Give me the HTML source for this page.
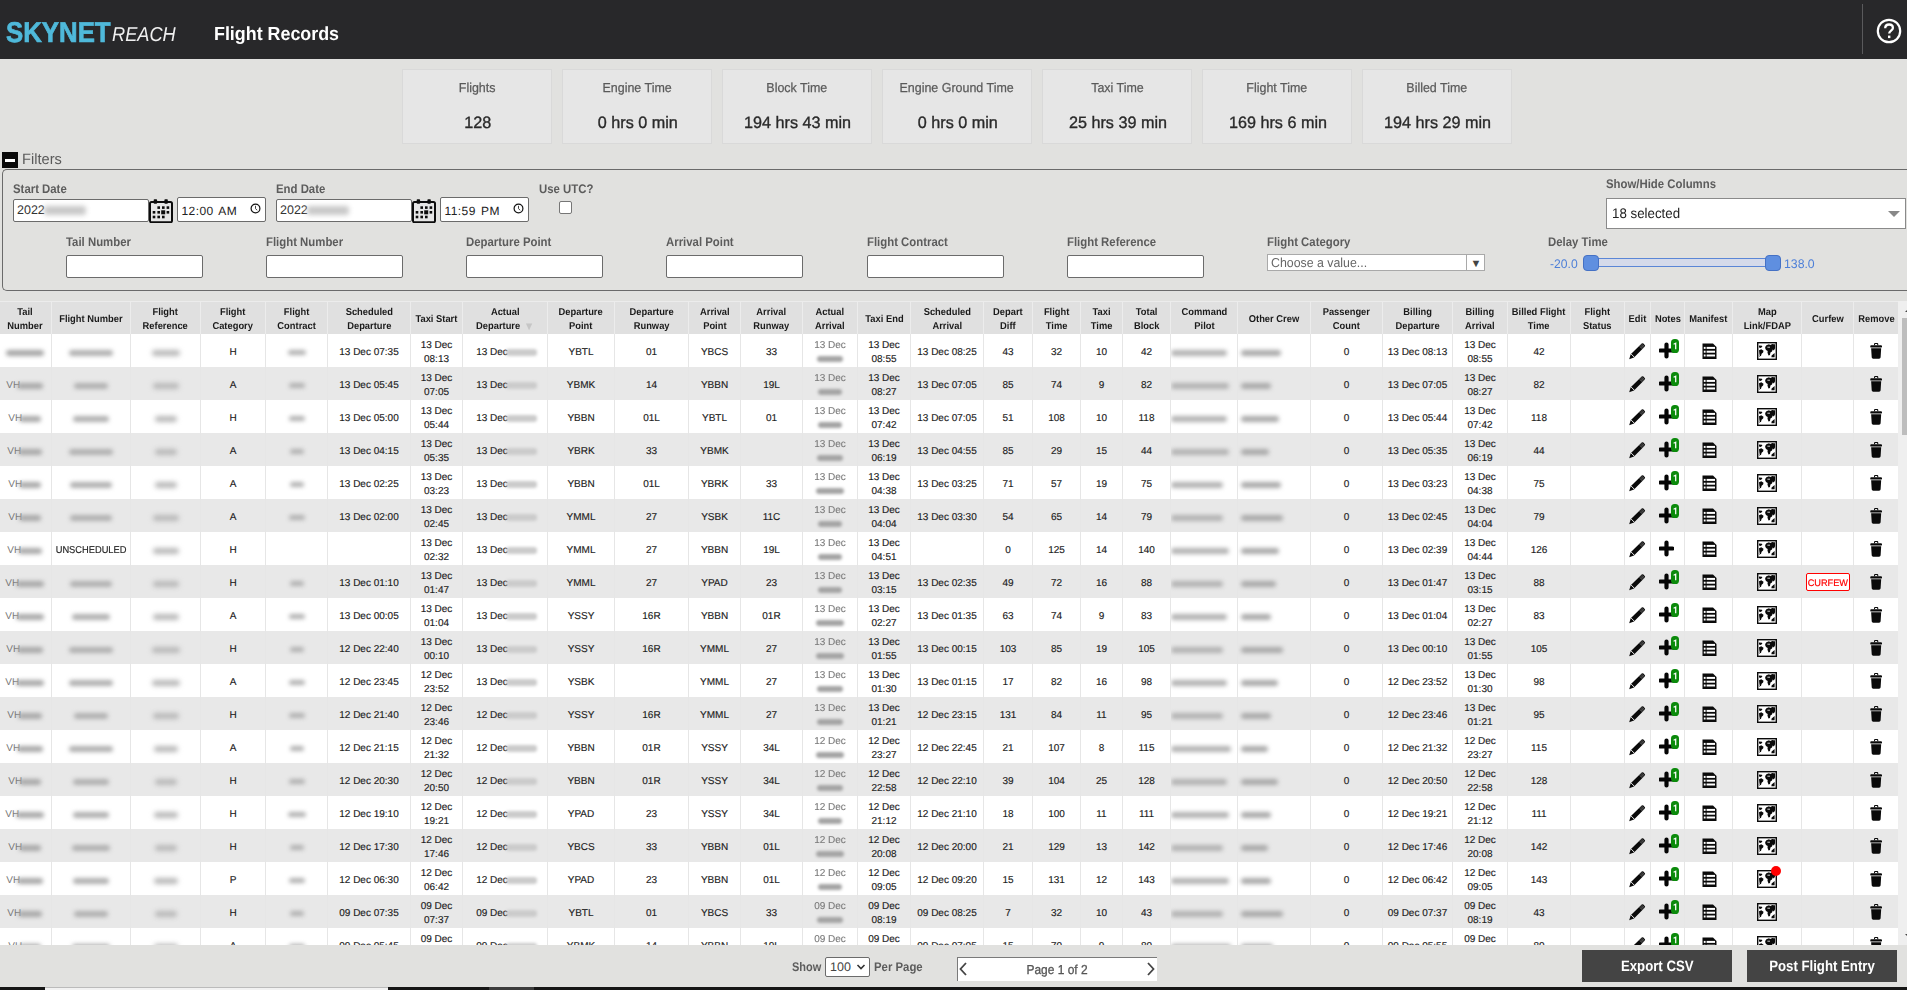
<!DOCTYPE html><html><head><meta charset="utf-8"><title>Flight Records</title><style>
*{box-sizing:border-box;margin:0;padding:0}
html,body{width:1907px;height:990px;overflow:hidden;background:#e1e1df;font-family:"Liberation Sans",sans-serif;text-rendering:geometricPrecision;}
.abs{position:absolute}
.t{position:absolute;white-space:nowrap;display:inline-block;transform-origin:0 50%;}
.tc{transform-origin:50% 50%;}
#top{position:absolute;left:0;top:0;width:1907px;height:59px;background:#28282a;}
.card{position:absolute;top:69px;width:150px;height:75px;background:#e6e6e6;border:1px solid #d9d9d9;}
.card .l{position:absolute;left:0;width:148px;top:10px;text-align:center;font-size:13px;color:#5a5a5a;line-height:16px}
.card .v{position:absolute;left:0;width:148px;top:41.6px;text-align:center;font-size:16.5px;color:#2a2a2a;line-height:22px;-webkit-text-stroke:.35px #2a2a2a;}
.card span{display:inline-block;transform-origin:50% 50%}
.lbl{position:absolute;font-size:12.5px;font-weight:bold;color:#5c5c5c;white-space:nowrap;line-height:15px;transform-origin:0 50%;transform:scaleX(.91)}
.inp{position:absolute;background:#fff;border:1px solid #6b6b6b;border-radius:2px;}
/* table */
#tbl{position:absolute;left:0;top:301px;width:1898px;height:644px;overflow:hidden;background:#fff}
.row{position:absolute;left:0;width:1898px;height:33px;}
.row.h{background:#e0e0e0;border-top:1px solid #ececec}
.row.h .c{height:32px}
.row.e{background:#e8e8e8}
.row.o{background:#fff}
.c{position:absolute;top:0;height:33px;border-right:1px solid #e6e6e6;display:flex;align-items:center;justify-content:center;text-align:center;font-size:10px;line-height:14px;color:#1c1c1c;overflow:hidden;-webkit-text-stroke:.15px #1c1c1c}
.row.h .c{-webkit-text-stroke:0;font-weight:bold;color:#1a1a1a;border-right:1px solid #ececec;line-height:14px}
.c>span{display:inline-block;transform-origin:50% 50%;white-space:nowrap;position:relative;top:2px}
.row.h .c>span{transform:scaleX(.935);top:1.5px}
.bl{display:inline-block;background:#8a8a8a;border-radius:3px;filter:blur(1.6px);vertical-align:middle}
.g{color:#8c8c8c}
svg{display:block}
</style></head><body>
<div id="top">
<span class="t" style="left:6px;top:15.8px;font-size:28.5px;font-weight:bold;color:#4fb9da;line-height:34px;transform:scaleX(.905);-webkit-text-stroke:.7px #4fb9da">SKYNET</span>
<span class="t" style="left:112px;top:20px;font-size:20px;font-style:italic;color:#f0f0f0;line-height:30px;transform:scaleX(.91)">REACH</span>
<span class="t" style="left:214px;top:23.4px;font-size:19px;font-weight:bold;color:#fff;line-height:24px;transform:scaleX(.94)">Flight Records</span>
<div class="abs" style="left:1862px;top:4px;width:1px;height:50px;background:#5a5a5c"></div>
<svg class="abs" style="left:1875px;top:17px" width="28" height="28" viewBox="0 0 28 28"><circle cx="14" cy="14" r="11.2" fill="none" stroke="#fff" stroke-width="2.2"/><path d="M10.2 11.2c0-2.3 1.7-3.7 3.9-3.7 2.2 0 3.8 1.4 3.8 3.4 0 2.6-3.7 3-3.7 5.7" fill="none" stroke="#fff" stroke-width="2.3"/><rect x="13" y="18.6" width="2.4" height="2.5" fill="#fff"/></svg>
</div>
<div class="card" style="left:402px"><div class="l"><span style="transform:scaleX(.958);-webkit-text-stroke:.25px #5a5a5a">Flights</span></div><div class="v"><span style="transform:scaleX(.98);position:relative;left:.8px">128</span></div></div>
<div class="card" style="left:562px"><div class="l"><span style="transform:scaleX(.958);-webkit-text-stroke:.25px #5a5a5a">Engine Time</span></div><div class="v"><span style="transform:scaleX(.98);position:relative;left:.8px">0 hrs 0 min</span></div></div>
<div class="card" style="left:722px"><div class="l"><span style="transform:scaleX(.958);-webkit-text-stroke:.25px #5a5a5a">Block Time</span></div><div class="v"><span style="transform:scaleX(.98);position:relative;left:.8px">194 hrs 43 min</span></div></div>
<div class="card" style="left:882px"><div class="l"><span style="transform:scaleX(.958);-webkit-text-stroke:.25px #5a5a5a">Engine Ground Time</span></div><div class="v"><span style="transform:scaleX(.98);position:relative;left:.8px">0 hrs 0 min</span></div></div>
<div class="card" style="left:1042px"><div class="l"><span style="transform:scaleX(.958);-webkit-text-stroke:.25px #5a5a5a">Taxi Time</span></div><div class="v"><span style="transform:scaleX(.98);position:relative;left:.8px">25 hrs 39 min</span></div></div>
<div class="card" style="left:1202px"><div class="l"><span style="transform:scaleX(.958);-webkit-text-stroke:.25px #5a5a5a">Flight Time</span></div><div class="v"><span style="transform:scaleX(.98);position:relative;left:.8px">169 hrs 6 min</span></div></div>
<div class="card" style="left:1362px"><div class="l"><span style="transform:scaleX(.958);-webkit-text-stroke:.25px #5a5a5a">Billed Time</span></div><div class="v"><span style="transform:scaleX(.98);position:relative;left:.8px">194 hrs 29 min</span></div></div>
<div class="abs" style="left:2px;top:152px;width:16px;height:16px;background:#0a0a0a"></div><div class="abs" style="left:5px;top:159px;width:10px;height:3px;background:#fff"></div>
<span class="t" style="left:22px;top:151px;font-size:15px;color:#5a5a5a;line-height:18px;transform:scaleX(.975)">Filters</span>
<div class="abs" style="left:2px;top:169px;width:1905px;height:122px;border:1px solid #6a6a6a;border-right:0;border-radius:5px 0 0 5px"></div>
<span class="lbl" style="left:13px;top:182px">Start Date</span>
<div class="inp" style="left:13px;top:199px;width:135.5px;height:23px"><span class="t" style="left:3px;top:3px;font-size:12.5px;color:#333;line-height:15px">2022</span><span class="bl" style="position:absolute;left:30px;top:6px;width:42px;height:9px;background:#c8c8c8;filter:blur(2.5px)"></span></div>
<div class="abs" style="left:148.6px;top:198px"><svg width="24" height="25" viewBox="0 0 24 25"><rect x="1" y="4" width="22" height="20.200" rx="1.500" fill="#e6e6e6" stroke="#0c0c0c" stroke-width="2"/><rect x="4.700" y="1.200" width="3.400" height="4.600" rx=".8" fill="#0c0c0c"/><rect x="15.400" y="1.200" width="3.400" height="4.600" rx=".8" fill="#0c0c0c"/><rect x="8.40" y="8.30" width="2.6" height="2.6" fill="#0c0c0c"/><rect x="13.00" y="8.30" width="2.6" height="2.6" fill="#0c0c0c"/><rect x="17.60" y="8.30" width="2.6" height="2.6" fill="#0c0c0c"/><rect x="3.70" y="13.00" width="2.6" height="2.6" fill="#0c0c0c"/><rect x="8.40" y="13.00" width="2.6" height="2.6" fill="#0c0c0c"/><rect x="12.20" y="12.30" width="4" height="4" fill="#0c0c0c"/><rect x="17.60" y="13.00" width="2.6" height="2.6" fill="#0c0c0c"/><rect x="3.70" y="17.70" width="2.6" height="2.6" fill="#0c0c0c"/><rect x="8.40" y="17.70" width="2.6" height="2.6" fill="#0c0c0c"/><rect x="13.00" y="17.70" width="2.6" height="2.6" fill="#0c0c0c"/></svg></div>
<div class="inp" style="left:177px;top:197px;width:89px;height:25px"><span class="t" style="left:3.5px;top:4.6px;font-size:12px;color:#222;line-height:16px;letter-spacing:.42px;word-spacing:1.5px">12:00 AM</span><div class="abs" style="left:70.6px;top:4.2px"><svg width="13" height="13" viewBox="0 0 13 13"><circle cx="6.5" cy="6.5" r="4.4" fill="none" stroke="#111" stroke-width="1.2"/><path d="M6.5 3.800v2.900l1.700 1.500" fill="none" stroke="#444" stroke-width="1"/></svg></div></div>
<span class="lbl" style="left:276px;top:182px">End Date</span>
<div class="inp" style="left:276px;top:199px;width:135.5px;height:23px"><span class="t" style="left:3px;top:3px;font-size:12.5px;color:#333;line-height:15px">2022</span><span class="bl" style="position:absolute;left:30px;top:6px;width:42px;height:9px;background:#c8c8c8;filter:blur(2.5px)"></span></div>
<div class="abs" style="left:411.6px;top:198px"><svg width="24" height="25" viewBox="0 0 24 25"><rect x="1" y="4" width="22" height="20.200" rx="1.500" fill="#e6e6e6" stroke="#0c0c0c" stroke-width="2"/><rect x="4.700" y="1.200" width="3.400" height="4.600" rx=".8" fill="#0c0c0c"/><rect x="15.400" y="1.200" width="3.400" height="4.600" rx=".8" fill="#0c0c0c"/><rect x="8.40" y="8.30" width="2.6" height="2.6" fill="#0c0c0c"/><rect x="13.00" y="8.30" width="2.6" height="2.6" fill="#0c0c0c"/><rect x="17.60" y="8.30" width="2.6" height="2.6" fill="#0c0c0c"/><rect x="3.70" y="13.00" width="2.6" height="2.6" fill="#0c0c0c"/><rect x="8.40" y="13.00" width="2.6" height="2.6" fill="#0c0c0c"/><rect x="12.20" y="12.30" width="4" height="4" fill="#0c0c0c"/><rect x="17.60" y="13.00" width="2.6" height="2.6" fill="#0c0c0c"/><rect x="3.70" y="17.70" width="2.6" height="2.6" fill="#0c0c0c"/><rect x="8.40" y="17.70" width="2.6" height="2.6" fill="#0c0c0c"/><rect x="13.00" y="17.70" width="2.6" height="2.6" fill="#0c0c0c"/></svg></div>
<div class="inp" style="left:440px;top:197px;width:89px;height:25px"><span class="t" style="left:3.5px;top:4.6px;font-size:12px;color:#222;line-height:16px;letter-spacing:.42px;word-spacing:1.5px">11:59 PM</span><div class="abs" style="left:70.6px;top:4.2px"><svg width="13" height="13" viewBox="0 0 13 13"><circle cx="6.5" cy="6.5" r="4.4" fill="none" stroke="#111" stroke-width="1.2"/><path d="M6.5 3.800v2.900l1.700 1.500" fill="none" stroke="#444" stroke-width="1"/></svg></div></div>
<span class="lbl" style="left:539px;top:182px">Use UTC?</span>
<div class="abs" style="left:559px;top:201px;width:13px;height:13px;background:#fff;border:1px solid #767676;border-radius:2px"></div>
<span class="lbl" style="left:66px;top:235px">Tail Number</span>
<div class="inp" style="left:66px;top:255px;width:137px;height:23px"></div>
<span class="lbl" style="left:266px;top:235px">Flight Number</span>
<div class="inp" style="left:266px;top:255px;width:137px;height:23px"></div>
<span class="lbl" style="left:466px;top:235px">Departure Point</span>
<div class="inp" style="left:466px;top:255px;width:137px;height:23px"></div>
<span class="lbl" style="left:666px;top:235px">Arrival Point</span>
<div class="inp" style="left:666px;top:255px;width:137px;height:23px"></div>
<span class="lbl" style="left:867px;top:235px">Flight Contract</span>
<div class="inp" style="left:867px;top:255px;width:137px;height:23px"></div>
<span class="lbl" style="left:1067px;top:235px">Flight Reference</span>
<div class="inp" style="left:1067px;top:255px;width:137px;height:23px"></div>
<span class="lbl" style="left:1267px;top:235px">Flight Category</span>
<div class="abs" style="left:1267px;top:254px;width:218px;height:17px;background:#fff;border:1px solid #a9a9a9"><span class="t" style="left:3px;top:0px;font-size:13px;color:#666;line-height:15px;transform:scaleX(.95)">Choose a value...</span><div class="abs" style="left:198px;top:0;width:1px;height:15px;background:#a9a9a9"></div><span class="t" style="left:202.5px;top:1.5px;font-size:11px;color:#444;line-height:14px">&#9660;</span></div>
<span class="lbl" style="left:1548px;top:235px">Delay Time</span>
<span class="t" style="left:1550px;top:257px;font-size:12.5px;color:#4d7fd8;line-height:15px;transform:scaleX(.97)">-20.0</span>
<div class="abs" style="left:1590px;top:258px;width:184px;height:9px;background:#d5daea;border:1px solid #5b86d6"></div>
<div class="abs" style="left:1583px;top:255px;width:16px;height:16px;background:#5f8fe0;border:1px solid #4571c4;border-radius:4px"></div>
<div class="abs" style="left:1765px;top:255px;width:16px;height:16px;background:#5f8fe0;border:1px solid #4571c4;border-radius:4px"></div>
<span class="t" style="left:1784px;top:257px;font-size:12.5px;color:#4d7fd8;line-height:15px;transform:scaleX(.98)">138.0</span>
<span class="lbl" style="left:1606px;top:177px">Show/Hide Columns</span>
<div class="abs" style="left:1606px;top:198px;width:300px;height:31px;background:#fff;border:1px solid #8a8a8a"><span class="t" style="left:5px;top:6px;font-size:14px;color:#222;line-height:17px;transform:scaleX(.95)">18 selected</span><div class="abs" style="left:281px;top:12px;width:0;height:0;border-left:6px solid transparent;border-right:6px solid transparent;border-top:6px solid #888"></div></div>
<div id="tbl">
<div class="row h" style="top:0">
<div class="c" style="left:0px;width:52px;padding-right:1.5px;"><span>Tail<br>Number</span></div>
<div class="c" style="left:52px;width:79px;"><span>Flight Number</span></div>
<div class="c" style="left:131px;width:70px;"><span>Flight<br>Reference</span></div>
<div class="c" style="left:201px;width:65px;"><span>Flight<br>Category</span></div>
<div class="c" style="left:266px;width:62px;"><span>Flight<br>Contract</span></div>
<div class="c" style="left:328px;width:83px;"><span>Scheduled<br>Departure</span></div>
<div class="c" style="left:411px;width:52px;"><span>Taxi Start</span></div>
<div class="c" style="left:463px;width:85px;"><span>Actual<br>Departure <i style="font-style:normal;color:#c6c6c6;font-size:11.5px;line-height:0;position:relative;top:1px;margin-left:1px">&#9660;</i></span></div>
<div class="c" style="left:548px;width:67px;"><span>Departure<br>Point</span></div>
<div class="c" style="left:615px;width:74px;"><span>Departure<br>Runway</span></div>
<div class="c" style="left:689px;width:52px;"><span>Arrival<br>Point</span></div>
<div class="c" style="left:741px;width:62px;"><span>Arrival<br>Runway</span></div>
<div class="c" style="left:803px;width:55px;"><span>Actual<br>Arrival</span></div>
<div class="c" style="left:858px;width:53px;"><span>Taxi End</span></div>
<div class="c" style="left:911px;width:73px;"><span>Scheduled<br>Arrival</span></div>
<div class="c" style="left:984px;width:49px;"><span>Depart<br>Diff</span></div>
<div class="c" style="left:1033px;width:48px;"><span>Flight<br>Time</span></div>
<div class="c" style="left:1081px;width:42px;"><span>Taxi<br>Time</span></div>
<div class="c" style="left:1123px;width:48px;"><span>Total<br>Block</span></div>
<div class="c" style="left:1171px;width:67px;"><span>Command<br>Pilot</span></div>
<div class="c" style="left:1238px;width:73px;"><span>Other Crew</span></div>
<div class="c" style="left:1311px;width:72px;"><span>Passenger<br>Count</span></div>
<div class="c" style="left:1383px;width:70px;"><span>Billing<br>Departure</span></div>
<div class="c" style="left:1453px;width:55px;"><span>Billing<br>Arrival</span></div>
<div class="c" style="left:1508px;width:63px;"><span>Billed Flight<br>Time</span></div>
<div class="c" style="left:1571px;width:54px;"><span>Flight<br>Status</span></div>
<div class="c" style="left:1625px;width:26px;"><span>Edit</span></div>
<div class="c" style="left:1651px;width:34px;"><span>Notes</span></div>
<div class="c" style="left:1685px;width:48px;"><span>Manifest</span></div>
<div class="c" style="left:1733px;width:69px;"><span>Map<br>Link/FDAP</span></div>
<div class="c" style="left:1802px;width:52px;"><span>Curfew</span></div>
<div class="c" style="left:1854px;width:45px;"><span>Remove</span></div>
</div>
<div class="row o" style="top:33px">
<div class="c" style="left:0px;width:52px;padding-right:1.5px;"><span class="bl" style="width:38px;height:6px;background:#a6a6a6;filter:blur(2px);"></span></div>
<div class="c" style="left:52px;width:79px;"><span class="bl" style="width:44px;height:6px;background:#b0b0b0;filter:blur(2.2px);"></span></div>
<div class="c" style="left:131px;width:70px;"><span class="bl" style="width:28px;height:6px;background:#b8b8b8;filter:blur(2.4px);"></span></div>
<div class="c" style="left:201px;width:65px;"><span>H</span></div>
<div class="c" style="left:266px;width:62px;"><span class="bl" style="width:18px;height:5px;background:#b0b0b0;filter:blur(2px);"></span></div>
<div class="c" style="left:328px;width:83px;"><span>13 Dec 07:35</span></div>
<div class="c" style="left:411px;width:52px;"><span>13 Dec<br>08:13</span></div>
<div class="c" style="left:463px;width:85px;"><span style="margin-right:-2px;margin-left:3px">13 Dec</span><span class="bl" style="width:31px;height:7px;background:#cbcbcb;filter:blur(1.6px);"></span></div>
<div class="c" style="left:548px;width:67px;"><span>YBTL</span></div>
<div class="c" style="left:615px;width:74px;"><span>01</span></div>
<div class="c" style="left:689px;width:52px;"><span>YBCS</span></div>
<div class="c" style="left:741px;width:62px;"><span>33</span></div>
<div class="c" style="left:803px;width:55px;"><span style="filter:blur(.45px);color:#787878;-webkit-text-stroke:.1px #787878">13 Dec<br><span class="bl" style="width:26px;height:6px;background:#a4a4a4;filter:blur(1.8px);"></span></span></div>
<div class="c" style="left:858px;width:53px;"><span>13 Dec<br>08:55</span></div>
<div class="c" style="left:911px;width:73px;"><span>13 Dec 08:25</span></div>
<div class="c" style="left:984px;width:49px;"><span>43</span></div>
<div class="c" style="left:1033px;width:48px;"><span>32</span></div>
<div class="c" style="left:1081px;width:42px;"><span>10</span></div>
<div class="c" style="left:1123px;width:48px;"><span>42</span></div>
<div class="c" style="left:1171px;width:67px;justify-content:flex-start;padding-left:0"><span class="bl" style="width:56px;height:6px;background:#b2b2b2;filter:blur(1.9px);"></span></div>
<div class="c" style="left:1238px;width:73px;justify-content:flex-start;padding-left:3px"><span class="bl" style="width:40px;height:6px;background:#a9a9a9;filter:blur(2px);"></span></div>
<div class="c" style="left:1311px;width:72px;"><span>0</span></div>
<div class="c" style="left:1383px;width:70px;"><span>13 Dec 08:13</span></div>
<div class="c" style="left:1453px;width:55px;"><span>13 Dec<br>08:55</span></div>
<div class="c" style="left:1508px;width:63px;"><span>42</span></div>
<div class="c" style="left:1571px;width:54px;"></div>
<div class="c" style="left:1625px;width:26px;padding-bottom:0"><svg style="position:relative;left:.2px;top:.9px" width="17" height="17" viewBox="0 0 17 17"><path d="M0.2 16.3L1.700 11.200 12.700 0.400Q13.600-.2 14.400.600L15.700 1.900Q16.400 2.700 15.900 3.600L5 14.600Z" fill="#0a0a0a"/><path d="M2 10.900l3.300 3.300" stroke="#fff" stroke-width=".9"/><path d="M10.800 3.300l2.500 2.500M11.900 2.300l2.500 2.500M12.900 1.300l2.500 2.500" stroke="#cfcfcf" stroke-width=".55"/></svg></div>
<div class="c" style="left:1651px;width:34px;overflow:visible"><svg style="position:relative;left:-.9px;top:-.1px" width="15" height="17" viewBox="0 0 15 17"><path d="M7.500 2.500v12M1.500 8.500h11.900" stroke="#050505" stroke-width="4.200" stroke-linecap="round" fill="none"/></svg><svg style="position:absolute;left:20px;top:4.8px" width="8" height="14" viewBox="0 0 8 14"><rect width="8" height="14" rx="3.600" fill="#0b8a0b"/><path d="M2.600 5.200L4.700 4.200V10.200" fill="none" stroke="#fff" stroke-width="1.250"/></svg></div>
<div class="c" style="left:1685px;width:48px;"><svg style="position:relative;left:.5px;top:1px" width="15" height="17" viewBox="0 0 15 17"><path d="M0.5 0.5h10.500l3.500 3.500v12.100h-14z" fill="#0a0a0a"/><g fill="#fff"><rect x="1.800" y="3.900" width="1.800" height="2"/><rect x="4.600" y="3.900" width="8.400" height="2"/><rect x="1.800" y="7.700" width="1.800" height="2"/><rect x="4.600" y="7.700" width="8.400" height="2"/><rect x="1.800" y="11.500" width="1.800" height="2"/><rect x="4.600" y="11.500" width="8.400" height="2"/></g></svg></div>
<div class="c" style="left:1733px;width:69px;"><svg width="20" height="18" viewBox="0 0 20 18"><rect x=".7" y=".7" width="18.600" height="16.600" fill="#fff" stroke="#0a0a0a" stroke-width="1.400"/><path d="M2 3.500l3 .3.300.9-1.600 1.300-1.700-.6zM2 8.200l2.300-.9 2.200 1.500-.4 1.800-1.500 1.200-.6 2.300-1.200-.2-.5-2.700zM8.200 5l1.200-1.800 2.600-.9 1.100.7 2.300-.9 2.700.3v3.800l-1.200 2.200-1.200-.9-.7 2-1.600 1-.4 2.600-1.500.4-1-2.700.2-1.900-1.700-.9-.8-1.700zM14.600 13.600l3-2.600v4.200h-3.200z" fill="#0a0a0a"/><path d="M10.400 5.200h2.600" stroke="#fff" stroke-width=".8"/><path d="M2 13.800l.8.900M16.800 3.200l.8-.5" stroke="#0a0a0a" stroke-width=".7"/></svg></div>
<div class="c" style="left:1802px;width:52px;"></div>
<div class="c" style="left:1854px;width:45px;"><svg style="position:relative;left:.25px;top:.5px" width="12.3" height="16.200" viewBox="0 0 13 17"><path d="M4.800 2.200v-1c0-.5.300-.8.800-.8h1.800c.5 0 .8.300.8.800v1" fill="none" stroke="#0a0a0a" stroke-width="1.100"/><path d="M1.400 2.300h10.200c.7 0 1.100.5 1.100 1.100v.7c0 .3-.2.500-.5.500h-11.400c-.3 0-.5-.2-.5-.5v-.7c0-.6.4-1.100 1.100-1.100z" fill="#0a0a0a"/><path d="M1.200 5.600h10.600l-.6 9.400c-.1.900-.7 1.500-1.600 1.500h-6.200c-.9 0-1.500-.6-1.600-1.500z" fill="#0a0a0a"/></svg></div>
</div>
<div class="row e" style="top:66px">
<div class="c" style="left:0px;width:52px;padding-right:1.5px;"><span style="margin-right:-3px;color:#777;-webkit-text-stroke:0">VH</span><span class="bl" style="width:26px;height:6px;background:#a8a8a8;filter:blur(2.2px);"></span></div>
<div class="c" style="left:52px;width:79px;"><span class="bl" style="width:34px;height:6px;background:#b0b0b0;filter:blur(2.2px);"></span></div>
<div class="c" style="left:131px;width:70px;"><span class="bl" style="width:26px;height:6px;background:#b8b8b8;filter:blur(2.4px);"></span></div>
<div class="c" style="left:201px;width:65px;"><span>A</span></div>
<div class="c" style="left:266px;width:62px;"><span class="bl" style="width:16px;height:5px;background:#b0b0b0;filter:blur(2px);"></span></div>
<div class="c" style="left:328px;width:83px;"><span>13 Dec 05:45</span></div>
<div class="c" style="left:411px;width:52px;"><span>13 Dec<br>07:05</span></div>
<div class="c" style="left:463px;width:85px;"><span style="margin-right:-2px;margin-left:3px">13 Dec</span><span class="bl" style="width:31px;height:7px;background:#cbcbcb;filter:blur(1.6px);"></span></div>
<div class="c" style="left:548px;width:67px;"><span>YBMK</span></div>
<div class="c" style="left:615px;width:74px;"><span>14</span></div>
<div class="c" style="left:689px;width:52px;"><span>YBBN</span></div>
<div class="c" style="left:741px;width:62px;"><span>19L</span></div>
<div class="c" style="left:803px;width:55px;"><span style="filter:blur(.45px);color:#787878;-webkit-text-stroke:.1px #787878">13 Dec<br><span class="bl" style="width:24px;height:6px;background:#a4a4a4;filter:blur(1.8px);"></span></span></div>
<div class="c" style="left:858px;width:53px;"><span>13 Dec<br>08:27</span></div>
<div class="c" style="left:911px;width:73px;"><span>13 Dec 07:05</span></div>
<div class="c" style="left:984px;width:49px;"><span>85</span></div>
<div class="c" style="left:1033px;width:48px;"><span>74</span></div>
<div class="c" style="left:1081px;width:42px;"><span>9</span></div>
<div class="c" style="left:1123px;width:48px;"><span>82</span></div>
<div class="c" style="left:1171px;width:67px;justify-content:flex-start;padding-left:0"><span class="bl" style="width:58px;height:6px;background:#b2b2b2;filter:blur(1.9px);"></span></div>
<div class="c" style="left:1238px;width:73px;justify-content:flex-start;padding-left:3px"><span class="bl" style="width:30px;height:6px;background:#a9a9a9;filter:blur(2px);"></span></div>
<div class="c" style="left:1311px;width:72px;"><span>0</span></div>
<div class="c" style="left:1383px;width:70px;"><span>13 Dec 07:05</span></div>
<div class="c" style="left:1453px;width:55px;"><span>13 Dec<br>08:27</span></div>
<div class="c" style="left:1508px;width:63px;"><span>82</span></div>
<div class="c" style="left:1571px;width:54px;"></div>
<div class="c" style="left:1625px;width:26px;padding-bottom:0"><svg style="position:relative;left:.2px;top:.9px" width="17" height="17" viewBox="0 0 17 17"><path d="M0.2 16.3L1.700 11.200 12.700 0.400Q13.600-.2 14.400.600L15.700 1.900Q16.400 2.700 15.900 3.600L5 14.600Z" fill="#0a0a0a"/><path d="M2 10.900l3.300 3.300" stroke="#fff" stroke-width=".9"/><path d="M10.800 3.300l2.500 2.500M11.900 2.300l2.500 2.500M12.900 1.300l2.500 2.500" stroke="#cfcfcf" stroke-width=".55"/></svg></div>
<div class="c" style="left:1651px;width:34px;overflow:visible"><svg style="position:relative;left:-.9px;top:-.1px" width="15" height="17" viewBox="0 0 15 17"><path d="M7.500 2.500v12M1.500 8.500h11.900" stroke="#050505" stroke-width="4.200" stroke-linecap="round" fill="none"/></svg><svg style="position:absolute;left:20px;top:4.8px" width="8" height="14" viewBox="0 0 8 14"><rect width="8" height="14" rx="3.600" fill="#0b8a0b"/><path d="M2.600 5.200L4.700 4.200V10.200" fill="none" stroke="#fff" stroke-width="1.250"/></svg></div>
<div class="c" style="left:1685px;width:48px;"><svg style="position:relative;left:.5px;top:1px" width="15" height="17" viewBox="0 0 15 17"><path d="M0.5 0.5h10.500l3.500 3.500v12.100h-14z" fill="#0a0a0a"/><g fill="#fff"><rect x="1.800" y="3.900" width="1.800" height="2"/><rect x="4.600" y="3.900" width="8.400" height="2"/><rect x="1.800" y="7.700" width="1.800" height="2"/><rect x="4.600" y="7.700" width="8.400" height="2"/><rect x="1.800" y="11.500" width="1.800" height="2"/><rect x="4.600" y="11.500" width="8.400" height="2"/></g></svg></div>
<div class="c" style="left:1733px;width:69px;"><svg width="20" height="18" viewBox="0 0 20 18"><rect x=".7" y=".7" width="18.600" height="16.600" fill="#fff" stroke="#0a0a0a" stroke-width="1.400"/><path d="M2 3.500l3 .3.300.9-1.600 1.300-1.700-.6zM2 8.200l2.300-.9 2.200 1.500-.4 1.800-1.500 1.200-.6 2.300-1.200-.2-.5-2.700zM8.200 5l1.200-1.800 2.600-.9 1.100.7 2.300-.9 2.700.3v3.800l-1.200 2.200-1.200-.9-.7 2-1.600 1-.4 2.600-1.500.4-1-2.700.2-1.900-1.700-.9-.8-1.700zM14.600 13.600l3-2.600v4.200h-3.200z" fill="#0a0a0a"/><path d="M10.400 5.200h2.600" stroke="#fff" stroke-width=".8"/><path d="M2 13.800l.8.900M16.800 3.200l.8-.5" stroke="#0a0a0a" stroke-width=".7"/></svg></div>
<div class="c" style="left:1802px;width:52px;"></div>
<div class="c" style="left:1854px;width:45px;"><svg style="position:relative;left:.25px;top:.5px" width="12.3" height="16.200" viewBox="0 0 13 17"><path d="M4.800 2.200v-1c0-.5.300-.8.800-.8h1.800c.5 0 .8.300.8.800v1" fill="none" stroke="#0a0a0a" stroke-width="1.100"/><path d="M1.400 2.300h10.200c.7 0 1.100.5 1.100 1.100v.7c0 .3-.2.500-.5.500h-11.400c-.3 0-.5-.2-.5-.5v-.7c0-.6.4-1.100 1.100-1.100z" fill="#0a0a0a"/><path d="M1.200 5.600h10.600l-.6 9.400c-.1.900-.7 1.500-1.600 1.500h-6.200c-.9 0-1.500-.6-1.600-1.500z" fill="#0a0a0a"/></svg></div>
</div>
<div class="row o" style="top:99px">
<div class="c" style="left:0px;width:52px;padding-right:1.5px;"><span style="margin-right:-3px;color:#777;-webkit-text-stroke:0">VH</span><span class="bl" style="width:22px;height:6px;background:#a8a8a8;filter:blur(2.2px);"></span></div>
<div class="c" style="left:52px;width:79px;"><span class="bl" style="width:36px;height:6px;background:#b0b0b0;filter:blur(2.2px);"></span></div>
<div class="c" style="left:131px;width:70px;"><span class="bl" style="width:22px;height:6px;background:#b8b8b8;filter:blur(2.4px);"></span></div>
<div class="c" style="left:201px;width:65px;"><span>H</span></div>
<div class="c" style="left:266px;width:62px;"><span class="bl" style="width:16px;height:5px;background:#b0b0b0;filter:blur(2px);"></span></div>
<div class="c" style="left:328px;width:83px;"><span>13 Dec 05:00</span></div>
<div class="c" style="left:411px;width:52px;"><span>13 Dec<br>05:44</span></div>
<div class="c" style="left:463px;width:85px;"><span style="margin-right:-2px;margin-left:3px">13 Dec</span><span class="bl" style="width:31px;height:7px;background:#cbcbcb;filter:blur(1.6px);"></span></div>
<div class="c" style="left:548px;width:67px;"><span>YBBN</span></div>
<div class="c" style="left:615px;width:74px;"><span>01L</span></div>
<div class="c" style="left:689px;width:52px;"><span>YBTL</span></div>
<div class="c" style="left:741px;width:62px;"><span>01</span></div>
<div class="c" style="left:803px;width:55px;"><span style="filter:blur(.45px);color:#787878;-webkit-text-stroke:.1px #787878">13 Dec<br><span class="bl" style="width:24px;height:6px;background:#a4a4a4;filter:blur(1.8px);"></span></span></div>
<div class="c" style="left:858px;width:53px;"><span>13 Dec<br>07:42</span></div>
<div class="c" style="left:911px;width:73px;"><span>13 Dec 07:05</span></div>
<div class="c" style="left:984px;width:49px;"><span>51</span></div>
<div class="c" style="left:1033px;width:48px;"><span>108</span></div>
<div class="c" style="left:1081px;width:42px;"><span>10</span></div>
<div class="c" style="left:1123px;width:48px;"><span>118</span></div>
<div class="c" style="left:1171px;width:67px;justify-content:flex-start;padding-left:0"><span class="bl" style="width:56px;height:6px;background:#b2b2b2;filter:blur(1.9px);"></span></div>
<div class="c" style="left:1238px;width:73px;justify-content:flex-start;padding-left:3px"><span class="bl" style="width:38px;height:6px;background:#a9a9a9;filter:blur(2px);"></span></div>
<div class="c" style="left:1311px;width:72px;"><span>0</span></div>
<div class="c" style="left:1383px;width:70px;"><span>13 Dec 05:44</span></div>
<div class="c" style="left:1453px;width:55px;"><span>13 Dec<br>07:42</span></div>
<div class="c" style="left:1508px;width:63px;"><span>118</span></div>
<div class="c" style="left:1571px;width:54px;"></div>
<div class="c" style="left:1625px;width:26px;padding-bottom:0"><svg style="position:relative;left:.2px;top:.9px" width="17" height="17" viewBox="0 0 17 17"><path d="M0.2 16.3L1.700 11.200 12.700 0.400Q13.600-.2 14.400.600L15.700 1.900Q16.400 2.700 15.900 3.600L5 14.600Z" fill="#0a0a0a"/><path d="M2 10.900l3.300 3.300" stroke="#fff" stroke-width=".9"/><path d="M10.800 3.300l2.500 2.500M11.900 2.300l2.500 2.500M12.900 1.300l2.500 2.500" stroke="#cfcfcf" stroke-width=".55"/></svg></div>
<div class="c" style="left:1651px;width:34px;overflow:visible"><svg style="position:relative;left:-.9px;top:-.1px" width="15" height="17" viewBox="0 0 15 17"><path d="M7.500 2.500v12M1.500 8.500h11.900" stroke="#050505" stroke-width="4.200" stroke-linecap="round" fill="none"/></svg><svg style="position:absolute;left:20px;top:4.8px" width="8" height="14" viewBox="0 0 8 14"><rect width="8" height="14" rx="3.600" fill="#0b8a0b"/><path d="M2.600 5.200L4.700 4.200V10.200" fill="none" stroke="#fff" stroke-width="1.250"/></svg></div>
<div class="c" style="left:1685px;width:48px;"><svg style="position:relative;left:.5px;top:1px" width="15" height="17" viewBox="0 0 15 17"><path d="M0.5 0.5h10.500l3.500 3.500v12.100h-14z" fill="#0a0a0a"/><g fill="#fff"><rect x="1.800" y="3.900" width="1.800" height="2"/><rect x="4.600" y="3.900" width="8.400" height="2"/><rect x="1.800" y="7.700" width="1.800" height="2"/><rect x="4.600" y="7.700" width="8.400" height="2"/><rect x="1.800" y="11.500" width="1.800" height="2"/><rect x="4.600" y="11.500" width="8.400" height="2"/></g></svg></div>
<div class="c" style="left:1733px;width:69px;"><svg width="20" height="18" viewBox="0 0 20 18"><rect x=".7" y=".7" width="18.600" height="16.600" fill="#fff" stroke="#0a0a0a" stroke-width="1.400"/><path d="M2 3.500l3 .3.300.9-1.600 1.300-1.700-.6zM2 8.200l2.300-.9 2.200 1.500-.4 1.800-1.500 1.200-.6 2.300-1.200-.2-.5-2.700zM8.200 5l1.200-1.800 2.600-.9 1.100.7 2.300-.9 2.700.3v3.800l-1.200 2.200-1.200-.9-.7 2-1.600 1-.4 2.600-1.500.4-1-2.700.2-1.900-1.700-.9-.8-1.700zM14.600 13.600l3-2.600v4.200h-3.200z" fill="#0a0a0a"/><path d="M10.400 5.200h2.600" stroke="#fff" stroke-width=".8"/><path d="M2 13.800l.8.900M16.800 3.200l.8-.5" stroke="#0a0a0a" stroke-width=".7"/></svg></div>
<div class="c" style="left:1802px;width:52px;"></div>
<div class="c" style="left:1854px;width:45px;"><svg style="position:relative;left:.25px;top:.5px" width="12.3" height="16.200" viewBox="0 0 13 17"><path d="M4.800 2.200v-1c0-.5.300-.8.800-.8h1.800c.5 0 .8.300.8.800v1" fill="none" stroke="#0a0a0a" stroke-width="1.100"/><path d="M1.400 2.300h10.200c.7 0 1.100.5 1.100 1.100v.7c0 .3-.2.500-.5.500h-11.400c-.3 0-.5-.2-.5-.5v-.7c0-.6.4-1.100 1.100-1.100z" fill="#0a0a0a"/><path d="M1.200 5.600h10.600l-.6 9.400c-.1.900-.7 1.500-1.600 1.500h-6.200c-.9 0-1.500-.6-1.600-1.500z" fill="#0a0a0a"/></svg></div>
</div>
<div class="row e" style="top:132px">
<div class="c" style="left:0px;width:52px;padding-right:1.5px;"><span style="margin-right:-3px;color:#777;-webkit-text-stroke:0">VH</span><span class="bl" style="width:24px;height:6px;background:#a8a8a8;filter:blur(2.2px);"></span></div>
<div class="c" style="left:52px;width:79px;"><span class="bl" style="width:44px;height:6px;background:#b0b0b0;filter:blur(2.2px);"></span></div>
<div class="c" style="left:131px;width:70px;"><span class="bl" style="width:22px;height:6px;background:#b8b8b8;filter:blur(2.4px);"></span></div>
<div class="c" style="left:201px;width:65px;"><span>A</span></div>
<div class="c" style="left:266px;width:62px;"><span class="bl" style="width:14px;height:5px;background:#b0b0b0;filter:blur(2px);"></span></div>
<div class="c" style="left:328px;width:83px;"><span>13 Dec 04:15</span></div>
<div class="c" style="left:411px;width:52px;"><span>13 Dec<br>05:35</span></div>
<div class="c" style="left:463px;width:85px;"><span style="margin-right:-2px;margin-left:3px">13 Dec</span><span class="bl" style="width:31px;height:7px;background:#cbcbcb;filter:blur(1.6px);"></span></div>
<div class="c" style="left:548px;width:67px;"><span>YBRK</span></div>
<div class="c" style="left:615px;width:74px;"><span>33</span></div>
<div class="c" style="left:689px;width:52px;"><span>YBMK</span></div>
<div class="c" style="left:741px;width:62px;"><span></span></div>
<div class="c" style="left:803px;width:55px;"><span style="filter:blur(.45px);color:#787878;-webkit-text-stroke:.1px #787878">13 Dec<br><span class="bl" style="width:26px;height:6px;background:#a4a4a4;filter:blur(1.8px);"></span></span></div>
<div class="c" style="left:858px;width:53px;"><span>13 Dec<br>06:19</span></div>
<div class="c" style="left:911px;width:73px;"><span>13 Dec 04:55</span></div>
<div class="c" style="left:984px;width:49px;"><span>85</span></div>
<div class="c" style="left:1033px;width:48px;"><span>29</span></div>
<div class="c" style="left:1081px;width:42px;"><span>15</span></div>
<div class="c" style="left:1123px;width:48px;"><span>44</span></div>
<div class="c" style="left:1171px;width:67px;justify-content:flex-start;padding-left:0"><span class="bl" style="width:58px;height:6px;background:#b2b2b2;filter:blur(1.9px);"></span></div>
<div class="c" style="left:1238px;width:73px;justify-content:flex-start;padding-left:3px"><span class="bl" style="width:28px;height:6px;background:#a9a9a9;filter:blur(2px);"></span></div>
<div class="c" style="left:1311px;width:72px;"><span>0</span></div>
<div class="c" style="left:1383px;width:70px;"><span>13 Dec 05:35</span></div>
<div class="c" style="left:1453px;width:55px;"><span>13 Dec<br>06:19</span></div>
<div class="c" style="left:1508px;width:63px;"><span>44</span></div>
<div class="c" style="left:1571px;width:54px;"></div>
<div class="c" style="left:1625px;width:26px;padding-bottom:0"><svg style="position:relative;left:.2px;top:.9px" width="17" height="17" viewBox="0 0 17 17"><path d="M0.2 16.3L1.700 11.200 12.700 0.400Q13.600-.2 14.400.600L15.700 1.900Q16.400 2.700 15.900 3.600L5 14.600Z" fill="#0a0a0a"/><path d="M2 10.900l3.300 3.300" stroke="#fff" stroke-width=".9"/><path d="M10.800 3.300l2.500 2.500M11.900 2.300l2.500 2.500M12.900 1.300l2.500 2.500" stroke="#cfcfcf" stroke-width=".55"/></svg></div>
<div class="c" style="left:1651px;width:34px;overflow:visible"><svg style="position:relative;left:-.9px;top:-.1px" width="15" height="17" viewBox="0 0 15 17"><path d="M7.500 2.500v12M1.500 8.500h11.900" stroke="#050505" stroke-width="4.200" stroke-linecap="round" fill="none"/></svg><svg style="position:absolute;left:20px;top:4.8px" width="8" height="14" viewBox="0 0 8 14"><rect width="8" height="14" rx="3.600" fill="#0b8a0b"/><path d="M2.600 5.200L4.700 4.200V10.200" fill="none" stroke="#fff" stroke-width="1.250"/></svg></div>
<div class="c" style="left:1685px;width:48px;"><svg style="position:relative;left:.5px;top:1px" width="15" height="17" viewBox="0 0 15 17"><path d="M0.5 0.5h10.500l3.500 3.500v12.100h-14z" fill="#0a0a0a"/><g fill="#fff"><rect x="1.800" y="3.900" width="1.800" height="2"/><rect x="4.600" y="3.900" width="8.400" height="2"/><rect x="1.800" y="7.700" width="1.800" height="2"/><rect x="4.600" y="7.700" width="8.400" height="2"/><rect x="1.800" y="11.500" width="1.800" height="2"/><rect x="4.600" y="11.500" width="8.400" height="2"/></g></svg></div>
<div class="c" style="left:1733px;width:69px;"><svg width="20" height="18" viewBox="0 0 20 18"><rect x=".7" y=".7" width="18.600" height="16.600" fill="#fff" stroke="#0a0a0a" stroke-width="1.400"/><path d="M2 3.500l3 .3.300.9-1.600 1.300-1.700-.6zM2 8.200l2.300-.9 2.200 1.500-.4 1.800-1.500 1.200-.6 2.300-1.200-.2-.5-2.700zM8.200 5l1.200-1.800 2.600-.9 1.100.7 2.300-.9 2.700.3v3.800l-1.200 2.200-1.200-.9-.7 2-1.600 1-.4 2.600-1.500.4-1-2.700.2-1.900-1.700-.9-.8-1.700zM14.600 13.600l3-2.600v4.200h-3.200z" fill="#0a0a0a"/><path d="M10.400 5.200h2.600" stroke="#fff" stroke-width=".8"/><path d="M2 13.800l.8.900M16.800 3.200l.8-.5" stroke="#0a0a0a" stroke-width=".7"/></svg></div>
<div class="c" style="left:1802px;width:52px;"></div>
<div class="c" style="left:1854px;width:45px;"><svg style="position:relative;left:.25px;top:.5px" width="12.3" height="16.200" viewBox="0 0 13 17"><path d="M4.800 2.200v-1c0-.5.300-.8.800-.8h1.800c.5 0 .8.300.8.800v1" fill="none" stroke="#0a0a0a" stroke-width="1.100"/><path d="M1.400 2.300h10.200c.7 0 1.100.5 1.100 1.100v.7c0 .3-.2.500-.5.500h-11.400c-.3 0-.5-.2-.5-.5v-.7c0-.6.4-1.100 1.100-1.100z" fill="#0a0a0a"/><path d="M1.200 5.600h10.600l-.6 9.400c-.1.900-.7 1.500-1.600 1.500h-6.200c-.9 0-1.500-.6-1.600-1.500z" fill="#0a0a0a"/></svg></div>
</div>
<div class="row o" style="top:165px">
<div class="c" style="left:0px;width:52px;padding-right:1.5px;"><span style="margin-right:-3px;color:#777;-webkit-text-stroke:0">VH</span><span class="bl" style="width:22px;height:6px;background:#a8a8a8;filter:blur(2.2px);"></span></div>
<div class="c" style="left:52px;width:79px;"><span class="bl" style="width:42px;height:6px;background:#b0b0b0;filter:blur(2.2px);"></span></div>
<div class="c" style="left:131px;width:70px;"><span class="bl" style="width:22px;height:6px;background:#b8b8b8;filter:blur(2.4px);"></span></div>
<div class="c" style="left:201px;width:65px;"><span>A</span></div>
<div class="c" style="left:266px;width:62px;"><span class="bl" style="width:14px;height:5px;background:#b0b0b0;filter:blur(2px);"></span></div>
<div class="c" style="left:328px;width:83px;"><span>13 Dec 02:25</span></div>
<div class="c" style="left:411px;width:52px;"><span>13 Dec<br>03:23</span></div>
<div class="c" style="left:463px;width:85px;"><span style="margin-right:-2px;margin-left:3px">13 Dec</span><span class="bl" style="width:31px;height:7px;background:#cbcbcb;filter:blur(1.6px);"></span></div>
<div class="c" style="left:548px;width:67px;"><span>YBBN</span></div>
<div class="c" style="left:615px;width:74px;"><span>01L</span></div>
<div class="c" style="left:689px;width:52px;"><span>YBRK</span></div>
<div class="c" style="left:741px;width:62px;"><span>33</span></div>
<div class="c" style="left:803px;width:55px;"><span style="filter:blur(.45px);color:#787878;-webkit-text-stroke:.1px #787878">13 Dec<br><span class="bl" style="width:28px;height:6px;background:#a4a4a4;filter:blur(1.8px);"></span></span></div>
<div class="c" style="left:858px;width:53px;"><span>13 Dec<br>04:38</span></div>
<div class="c" style="left:911px;width:73px;"><span>13 Dec 03:25</span></div>
<div class="c" style="left:984px;width:49px;"><span>71</span></div>
<div class="c" style="left:1033px;width:48px;"><span>57</span></div>
<div class="c" style="left:1081px;width:42px;"><span>19</span></div>
<div class="c" style="left:1123px;width:48px;"><span>75</span></div>
<div class="c" style="left:1171px;width:67px;justify-content:flex-start;padding-left:0"><span class="bl" style="width:52px;height:6px;background:#b2b2b2;filter:blur(1.9px);"></span></div>
<div class="c" style="left:1238px;width:73px;justify-content:flex-start;padding-left:3px"><span class="bl" style="width:40px;height:6px;background:#a9a9a9;filter:blur(2px);"></span></div>
<div class="c" style="left:1311px;width:72px;"><span>0</span></div>
<div class="c" style="left:1383px;width:70px;"><span>13 Dec 03:23</span></div>
<div class="c" style="left:1453px;width:55px;"><span>13 Dec<br>04:38</span></div>
<div class="c" style="left:1508px;width:63px;"><span>75</span></div>
<div class="c" style="left:1571px;width:54px;"></div>
<div class="c" style="left:1625px;width:26px;padding-bottom:0"><svg style="position:relative;left:.2px;top:.9px" width="17" height="17" viewBox="0 0 17 17"><path d="M0.2 16.3L1.700 11.200 12.700 0.400Q13.600-.2 14.400.600L15.700 1.900Q16.400 2.700 15.900 3.600L5 14.600Z" fill="#0a0a0a"/><path d="M2 10.900l3.300 3.300" stroke="#fff" stroke-width=".9"/><path d="M10.800 3.300l2.500 2.500M11.900 2.300l2.500 2.500M12.900 1.300l2.500 2.500" stroke="#cfcfcf" stroke-width=".55"/></svg></div>
<div class="c" style="left:1651px;width:34px;overflow:visible"><svg style="position:relative;left:-.9px;top:-.1px" width="15" height="17" viewBox="0 0 15 17"><path d="M7.500 2.500v12M1.500 8.500h11.900" stroke="#050505" stroke-width="4.200" stroke-linecap="round" fill="none"/></svg><svg style="position:absolute;left:20px;top:4.8px" width="8" height="14" viewBox="0 0 8 14"><rect width="8" height="14" rx="3.600" fill="#0b8a0b"/><path d="M2.600 5.200L4.700 4.200V10.200" fill="none" stroke="#fff" stroke-width="1.250"/></svg></div>
<div class="c" style="left:1685px;width:48px;"><svg style="position:relative;left:.5px;top:1px" width="15" height="17" viewBox="0 0 15 17"><path d="M0.5 0.5h10.500l3.500 3.500v12.100h-14z" fill="#0a0a0a"/><g fill="#fff"><rect x="1.800" y="3.900" width="1.800" height="2"/><rect x="4.600" y="3.900" width="8.400" height="2"/><rect x="1.800" y="7.700" width="1.800" height="2"/><rect x="4.600" y="7.700" width="8.400" height="2"/><rect x="1.800" y="11.500" width="1.800" height="2"/><rect x="4.600" y="11.500" width="8.400" height="2"/></g></svg></div>
<div class="c" style="left:1733px;width:69px;"><svg width="20" height="18" viewBox="0 0 20 18"><rect x=".7" y=".7" width="18.600" height="16.600" fill="#fff" stroke="#0a0a0a" stroke-width="1.400"/><path d="M2 3.500l3 .3.300.9-1.600 1.300-1.700-.6zM2 8.200l2.300-.9 2.200 1.500-.4 1.800-1.500 1.200-.6 2.300-1.200-.2-.5-2.700zM8.200 5l1.200-1.800 2.600-.9 1.100.7 2.300-.9 2.700.3v3.800l-1.200 2.200-1.200-.9-.7 2-1.600 1-.4 2.600-1.500.4-1-2.700.2-1.900-1.700-.9-.8-1.700zM14.600 13.600l3-2.600v4.200h-3.200z" fill="#0a0a0a"/><path d="M10.400 5.200h2.600" stroke="#fff" stroke-width=".8"/><path d="M2 13.800l.8.900M16.800 3.200l.8-.5" stroke="#0a0a0a" stroke-width=".7"/></svg></div>
<div class="c" style="left:1802px;width:52px;"></div>
<div class="c" style="left:1854px;width:45px;"><svg style="position:relative;left:.25px;top:.5px" width="12.3" height="16.200" viewBox="0 0 13 17"><path d="M4.800 2.200v-1c0-.5.300-.8.800-.8h1.800c.5 0 .8.300.8.800v1" fill="none" stroke="#0a0a0a" stroke-width="1.100"/><path d="M1.400 2.300h10.200c.7 0 1.100.5 1.100 1.100v.7c0 .3-.2.500-.5.500h-11.400c-.3 0-.5-.2-.5-.5v-.7c0-.6.4-1.100 1.100-1.100z" fill="#0a0a0a"/><path d="M1.200 5.600h10.600l-.6 9.400c-.1.900-.7 1.500-1.600 1.500h-6.200c-.9 0-1.500-.6-1.600-1.500z" fill="#0a0a0a"/></svg></div>
</div>
<div class="row e" style="top:198px">
<div class="c" style="left:0px;width:52px;padding-right:1.5px;"><span style="margin-right:-3px;color:#777;-webkit-text-stroke:0">VH</span><span class="bl" style="width:22px;height:6px;background:#a8a8a8;filter:blur(2.2px);"></span></div>
<div class="c" style="left:52px;width:79px;"><span class="bl" style="width:42px;height:6px;background:#b0b0b0;filter:blur(2.2px);"></span></div>
<div class="c" style="left:131px;width:70px;"><span class="bl" style="width:26px;height:6px;background:#b8b8b8;filter:blur(2.4px);"></span></div>
<div class="c" style="left:201px;width:65px;"><span>A</span></div>
<div class="c" style="left:266px;width:62px;"><span class="bl" style="width:16px;height:5px;background:#b0b0b0;filter:blur(2px);"></span></div>
<div class="c" style="left:328px;width:83px;"><span>13 Dec 02:00</span></div>
<div class="c" style="left:411px;width:52px;"><span>13 Dec<br>02:45</span></div>
<div class="c" style="left:463px;width:85px;"><span style="margin-right:-2px;margin-left:3px">13 Dec</span><span class="bl" style="width:31px;height:7px;background:#cbcbcb;filter:blur(1.6px);"></span></div>
<div class="c" style="left:548px;width:67px;"><span>YMML</span></div>
<div class="c" style="left:615px;width:74px;"><span>27</span></div>
<div class="c" style="left:689px;width:52px;"><span>YSBK</span></div>
<div class="c" style="left:741px;width:62px;"><span>11C</span></div>
<div class="c" style="left:803px;width:55px;"><span style="filter:blur(.45px);color:#787878;-webkit-text-stroke:.1px #787878">13 Dec<br><span class="bl" style="width:24px;height:6px;background:#a4a4a4;filter:blur(1.8px);"></span></span></div>
<div class="c" style="left:858px;width:53px;"><span>13 Dec<br>04:04</span></div>
<div class="c" style="left:911px;width:73px;"><span>13 Dec 03:30</span></div>
<div class="c" style="left:984px;width:49px;"><span>54</span></div>
<div class="c" style="left:1033px;width:48px;"><span>65</span></div>
<div class="c" style="left:1081px;width:42px;"><span>14</span></div>
<div class="c" style="left:1123px;width:48px;"><span>79</span></div>
<div class="c" style="left:1171px;width:67px;justify-content:flex-start;padding-left:0"><span class="bl" style="width:52px;height:6px;background:#b2b2b2;filter:blur(1.9px);"></span></div>
<div class="c" style="left:1238px;width:73px;justify-content:flex-start;padding-left:3px"><span class="bl" style="width:42px;height:6px;background:#a9a9a9;filter:blur(2px);"></span></div>
<div class="c" style="left:1311px;width:72px;"><span>0</span></div>
<div class="c" style="left:1383px;width:70px;"><span>13 Dec 02:45</span></div>
<div class="c" style="left:1453px;width:55px;"><span>13 Dec<br>04:04</span></div>
<div class="c" style="left:1508px;width:63px;"><span>79</span></div>
<div class="c" style="left:1571px;width:54px;"></div>
<div class="c" style="left:1625px;width:26px;padding-bottom:0"><svg style="position:relative;left:.2px;top:.9px" width="17" height="17" viewBox="0 0 17 17"><path d="M0.2 16.3L1.700 11.200 12.700 0.400Q13.600-.2 14.400.600L15.700 1.900Q16.400 2.700 15.900 3.600L5 14.600Z" fill="#0a0a0a"/><path d="M2 10.900l3.300 3.300" stroke="#fff" stroke-width=".9"/><path d="M10.800 3.300l2.500 2.500M11.900 2.300l2.500 2.500M12.900 1.300l2.500 2.500" stroke="#cfcfcf" stroke-width=".55"/></svg></div>
<div class="c" style="left:1651px;width:34px;overflow:visible"><svg style="position:relative;left:-.9px;top:-.1px" width="15" height="17" viewBox="0 0 15 17"><path d="M7.500 2.500v12M1.500 8.500h11.900" stroke="#050505" stroke-width="4.200" stroke-linecap="round" fill="none"/></svg><svg style="position:absolute;left:20px;top:4.8px" width="8" height="14" viewBox="0 0 8 14"><rect width="8" height="14" rx="3.600" fill="#0b8a0b"/><path d="M2.600 5.200L4.700 4.200V10.200" fill="none" stroke="#fff" stroke-width="1.250"/></svg></div>
<div class="c" style="left:1685px;width:48px;"><svg style="position:relative;left:.5px;top:1px" width="15" height="17" viewBox="0 0 15 17"><path d="M0.5 0.5h10.500l3.500 3.500v12.100h-14z" fill="#0a0a0a"/><g fill="#fff"><rect x="1.800" y="3.900" width="1.800" height="2"/><rect x="4.600" y="3.900" width="8.400" height="2"/><rect x="1.800" y="7.700" width="1.800" height="2"/><rect x="4.600" y="7.700" width="8.400" height="2"/><rect x="1.800" y="11.500" width="1.800" height="2"/><rect x="4.600" y="11.500" width="8.400" height="2"/></g></svg></div>
<div class="c" style="left:1733px;width:69px;"><svg width="20" height="18" viewBox="0 0 20 18"><rect x=".7" y=".7" width="18.600" height="16.600" fill="#fff" stroke="#0a0a0a" stroke-width="1.400"/><path d="M2 3.500l3 .3.300.9-1.600 1.300-1.700-.6zM2 8.200l2.300-.9 2.200 1.500-.4 1.800-1.500 1.200-.6 2.300-1.200-.2-.5-2.700zM8.200 5l1.200-1.800 2.600-.9 1.100.7 2.300-.9 2.700.3v3.800l-1.200 2.200-1.200-.9-.7 2-1.600 1-.4 2.600-1.500.4-1-2.700.2-1.900-1.700-.9-.8-1.700zM14.600 13.600l3-2.600v4.200h-3.200z" fill="#0a0a0a"/><path d="M10.400 5.200h2.600" stroke="#fff" stroke-width=".8"/><path d="M2 13.800l.8.900M16.800 3.200l.8-.5" stroke="#0a0a0a" stroke-width=".7"/></svg></div>
<div class="c" style="left:1802px;width:52px;"></div>
<div class="c" style="left:1854px;width:45px;"><svg style="position:relative;left:.25px;top:.5px" width="12.3" height="16.200" viewBox="0 0 13 17"><path d="M4.800 2.200v-1c0-.5.300-.8.800-.8h1.800c.5 0 .8.300.8.800v1" fill="none" stroke="#0a0a0a" stroke-width="1.100"/><path d="M1.400 2.300h10.200c.7 0 1.100.5 1.100 1.100v.7c0 .3-.2.500-.5.500h-11.400c-.3 0-.5-.2-.5-.5v-.7c0-.6.4-1.100 1.100-1.100z" fill="#0a0a0a"/><path d="M1.200 5.600h10.600l-.6 9.400c-.1.900-.7 1.500-1.600 1.500h-6.200c-.9 0-1.500-.6-1.600-1.500z" fill="#0a0a0a"/></svg></div>
</div>
<div class="row o" style="top:231px">
<div class="c" style="left:0px;width:52px;padding-right:1.5px;"><span style="margin-right:-3px;color:#777;-webkit-text-stroke:0">VH</span><span class="bl" style="width:24px;height:6px;background:#a8a8a8;filter:blur(2.2px);"></span></div>
<div class="c" style="left:52px;width:79px;"><span style="transform:scaleX(.93)">UNSCHEDULED</span></div>
<div class="c" style="left:131px;width:70px;"><span class="bl" style="width:26px;height:6px;background:#b8b8b8;filter:blur(2.4px);"></span></div>
<div class="c" style="left:201px;width:65px;"><span>H</span></div>
<div class="c" style="left:266px;width:62px;"></div>
<div class="c" style="left:328px;width:83px;"><span></span></div>
<div class="c" style="left:411px;width:52px;"><span>13 Dec<br>02:32</span></div>
<div class="c" style="left:463px;width:85px;"><span style="margin-right:-2px;margin-left:3px">13 Dec</span><span class="bl" style="width:31px;height:7px;background:#cbcbcb;filter:blur(1.6px);"></span></div>
<div class="c" style="left:548px;width:67px;"><span>YMML</span></div>
<div class="c" style="left:615px;width:74px;"><span>27</span></div>
<div class="c" style="left:689px;width:52px;"><span>YBBN</span></div>
<div class="c" style="left:741px;width:62px;"><span>19L</span></div>
<div class="c" style="left:803px;width:55px;"><span style="filter:blur(.45px);color:#787878;-webkit-text-stroke:.1px #787878">13 Dec<br><span class="bl" style="width:24px;height:6px;background:#a4a4a4;filter:blur(1.8px);"></span></span></div>
<div class="c" style="left:858px;width:53px;"><span>13 Dec<br>04:51</span></div>
<div class="c" style="left:911px;width:73px;"><span></span></div>
<div class="c" style="left:984px;width:49px;"><span>0</span></div>
<div class="c" style="left:1033px;width:48px;"><span>125</span></div>
<div class="c" style="left:1081px;width:42px;"><span>14</span></div>
<div class="c" style="left:1123px;width:48px;"><span>140</span></div>
<div class="c" style="left:1171px;width:67px;justify-content:flex-start;padding-left:0"><span class="bl" style="width:58px;height:6px;background:#b2b2b2;filter:blur(1.9px);"></span></div>
<div class="c" style="left:1238px;width:73px;justify-content:flex-start;padding-left:3px"><span class="bl" style="width:38px;height:6px;background:#a9a9a9;filter:blur(2px);"></span></div>
<div class="c" style="left:1311px;width:72px;"><span>0</span></div>
<div class="c" style="left:1383px;width:70px;"><span>13 Dec 02:39</span></div>
<div class="c" style="left:1453px;width:55px;"><span>13 Dec<br>04:44</span></div>
<div class="c" style="left:1508px;width:63px;"><span>126</span></div>
<div class="c" style="left:1571px;width:54px;"></div>
<div class="c" style="left:1625px;width:26px;padding-bottom:0"><svg style="position:relative;left:.2px;top:.9px" width="17" height="17" viewBox="0 0 17 17"><path d="M0.2 16.3L1.700 11.200 12.700 0.400Q13.600-.2 14.400.600L15.700 1.900Q16.400 2.700 15.900 3.600L5 14.600Z" fill="#0a0a0a"/><path d="M2 10.900l3.300 3.300" stroke="#fff" stroke-width=".9"/><path d="M10.800 3.300l2.500 2.500M11.900 2.300l2.500 2.500M12.900 1.300l2.500 2.500" stroke="#cfcfcf" stroke-width=".55"/></svg></div>
<div class="c" style="left:1651px;width:34px;overflow:visible"><svg style="position:relative;left:-.9px;top:-.1px" width="15" height="17" viewBox="0 0 15 17"><path d="M7.500 2.500v12M1.500 8.500h11.900" stroke="#050505" stroke-width="4.200" stroke-linecap="round" fill="none"/></svg></div>
<div class="c" style="left:1685px;width:48px;"><svg style="position:relative;left:.5px;top:1px" width="15" height="17" viewBox="0 0 15 17"><path d="M0.5 0.5h10.500l3.500 3.500v12.100h-14z" fill="#0a0a0a"/><g fill="#fff"><rect x="1.800" y="3.900" width="1.800" height="2"/><rect x="4.600" y="3.900" width="8.400" height="2"/><rect x="1.800" y="7.700" width="1.800" height="2"/><rect x="4.600" y="7.700" width="8.400" height="2"/><rect x="1.800" y="11.500" width="1.800" height="2"/><rect x="4.600" y="11.500" width="8.400" height="2"/></g></svg></div>
<div class="c" style="left:1733px;width:69px;"><svg width="20" height="18" viewBox="0 0 20 18"><rect x=".7" y=".7" width="18.600" height="16.600" fill="#fff" stroke="#0a0a0a" stroke-width="1.400"/><path d="M2 3.500l3 .3.300.9-1.600 1.300-1.700-.6zM2 8.200l2.300-.9 2.200 1.500-.4 1.800-1.500 1.200-.6 2.300-1.200-.2-.5-2.700zM8.200 5l1.200-1.800 2.600-.9 1.100.7 2.300-.9 2.700.3v3.800l-1.200 2.200-1.200-.9-.7 2-1.600 1-.4 2.600-1.500.4-1-2.700.2-1.900-1.700-.9-.8-1.700zM14.600 13.600l3-2.600v4.200h-3.200z" fill="#0a0a0a"/><path d="M10.400 5.200h2.600" stroke="#fff" stroke-width=".8"/><path d="M2 13.800l.8.900M16.800 3.200l.8-.5" stroke="#0a0a0a" stroke-width=".7"/></svg></div>
<div class="c" style="left:1802px;width:52px;"></div>
<div class="c" style="left:1854px;width:45px;"><svg style="position:relative;left:.25px;top:.5px" width="12.3" height="16.200" viewBox="0 0 13 17"><path d="M4.800 2.200v-1c0-.5.300-.8.800-.8h1.800c.5 0 .8.300.8.800v1" fill="none" stroke="#0a0a0a" stroke-width="1.100"/><path d="M1.400 2.300h10.200c.7 0 1.100.5 1.100 1.100v.7c0 .3-.2.500-.5.500h-11.400c-.3 0-.5-.2-.5-.5v-.7c0-.6.4-1.100 1.100-1.100z" fill="#0a0a0a"/><path d="M1.200 5.600h10.600l-.6 9.400c-.1.900-.7 1.500-1.600 1.500h-6.200c-.9 0-1.500-.6-1.600-1.500z" fill="#0a0a0a"/></svg></div>
</div>
<div class="row e" style="top:264px">
<div class="c" style="left:0px;width:52px;padding-right:1.5px;"><span style="margin-right:-3px;color:#777;-webkit-text-stroke:0">VH</span><span class="bl" style="width:28px;height:6px;background:#a8a8a8;filter:blur(2.2px);"></span></div>
<div class="c" style="left:52px;width:79px;"><span class="bl" style="width:42px;height:6px;background:#b0b0b0;filter:blur(2.2px);"></span></div>
<div class="c" style="left:131px;width:70px;"><span class="bl" style="width:26px;height:6px;background:#b8b8b8;filter:blur(2.4px);"></span></div>
<div class="c" style="left:201px;width:65px;"><span>H</span></div>
<div class="c" style="left:266px;width:62px;"><span class="bl" style="width:14px;height:5px;background:#b0b0b0;filter:blur(2px);"></span></div>
<div class="c" style="left:328px;width:83px;"><span>13 Dec 01:10</span></div>
<div class="c" style="left:411px;width:52px;"><span>13 Dec<br>01:47</span></div>
<div class="c" style="left:463px;width:85px;"><span style="margin-right:-2px;margin-left:3px">13 Dec</span><span class="bl" style="width:31px;height:7px;background:#cbcbcb;filter:blur(1.6px);"></span></div>
<div class="c" style="left:548px;width:67px;"><span>YMML</span></div>
<div class="c" style="left:615px;width:74px;"><span>27</span></div>
<div class="c" style="left:689px;width:52px;"><span>YPAD</span></div>
<div class="c" style="left:741px;width:62px;"><span>23</span></div>
<div class="c" style="left:803px;width:55px;"><span style="filter:blur(.45px);color:#787878;-webkit-text-stroke:.1px #787878">13 Dec<br><span class="bl" style="width:24px;height:6px;background:#a4a4a4;filter:blur(1.8px);"></span></span></div>
<div class="c" style="left:858px;width:53px;"><span>13 Dec<br>03:15</span></div>
<div class="c" style="left:911px;width:73px;"><span>13 Dec 02:35</span></div>
<div class="c" style="left:984px;width:49px;"><span>49</span></div>
<div class="c" style="left:1033px;width:48px;"><span>72</span></div>
<div class="c" style="left:1081px;width:42px;"><span>16</span></div>
<div class="c" style="left:1123px;width:48px;"><span>88</span></div>
<div class="c" style="left:1171px;width:67px;justify-content:flex-start;padding-left:0"><span class="bl" style="width:52px;height:6px;background:#b2b2b2;filter:blur(1.9px);"></span></div>
<div class="c" style="left:1238px;width:73px;justify-content:flex-start;padding-left:3px"><span class="bl" style="width:35px;height:6px;background:#a9a9a9;filter:blur(2px);"></span></div>
<div class="c" style="left:1311px;width:72px;"><span>0</span></div>
<div class="c" style="left:1383px;width:70px;"><span>13 Dec 01:47</span></div>
<div class="c" style="left:1453px;width:55px;"><span>13 Dec<br>03:15</span></div>
<div class="c" style="left:1508px;width:63px;"><span>88</span></div>
<div class="c" style="left:1571px;width:54px;"></div>
<div class="c" style="left:1625px;width:26px;padding-bottom:0"><svg style="position:relative;left:.2px;top:.9px" width="17" height="17" viewBox="0 0 17 17"><path d="M0.2 16.3L1.700 11.200 12.700 0.400Q13.600-.2 14.400.600L15.700 1.900Q16.400 2.700 15.900 3.600L5 14.600Z" fill="#0a0a0a"/><path d="M2 10.900l3.300 3.300" stroke="#fff" stroke-width=".9"/><path d="M10.800 3.300l2.500 2.500M11.900 2.300l2.500 2.500M12.900 1.300l2.500 2.500" stroke="#cfcfcf" stroke-width=".55"/></svg></div>
<div class="c" style="left:1651px;width:34px;overflow:visible"><svg style="position:relative;left:-.9px;top:-.1px" width="15" height="17" viewBox="0 0 15 17"><path d="M7.500 2.500v12M1.500 8.500h11.900" stroke="#050505" stroke-width="4.200" stroke-linecap="round" fill="none"/></svg><svg style="position:absolute;left:20px;top:4.8px" width="8" height="14" viewBox="0 0 8 14"><rect width="8" height="14" rx="3.600" fill="#0b8a0b"/><path d="M2.600 5.200L4.700 4.200V10.200" fill="none" stroke="#fff" stroke-width="1.250"/></svg></div>
<div class="c" style="left:1685px;width:48px;"><svg style="position:relative;left:.5px;top:1px" width="15" height="17" viewBox="0 0 15 17"><path d="M0.5 0.5h10.500l3.500 3.500v12.100h-14z" fill="#0a0a0a"/><g fill="#fff"><rect x="1.800" y="3.900" width="1.800" height="2"/><rect x="4.600" y="3.900" width="8.400" height="2"/><rect x="1.800" y="7.700" width="1.800" height="2"/><rect x="4.600" y="7.700" width="8.400" height="2"/><rect x="1.800" y="11.500" width="1.800" height="2"/><rect x="4.600" y="11.500" width="8.400" height="2"/></g></svg></div>
<div class="c" style="left:1733px;width:69px;"><svg width="20" height="18" viewBox="0 0 20 18"><rect x=".7" y=".7" width="18.600" height="16.600" fill="#fff" stroke="#0a0a0a" stroke-width="1.400"/><path d="M2 3.500l3 .3.300.9-1.600 1.300-1.700-.6zM2 8.200l2.300-.9 2.200 1.500-.4 1.800-1.500 1.200-.6 2.300-1.200-.2-.5-2.700zM8.200 5l1.200-1.800 2.600-.9 1.100.7 2.300-.9 2.700.3v3.800l-1.200 2.200-1.200-.9-.7 2-1.600 1-.4 2.600-1.500.4-1-2.700.2-1.900-1.700-.9-.8-1.700zM14.600 13.600l3-2.600v4.200h-3.200z" fill="#0a0a0a"/><path d="M10.400 5.200h2.600" stroke="#fff" stroke-width=".8"/><path d="M2 13.800l.8.900M16.800 3.200l.8-.5" stroke="#0a0a0a" stroke-width=".7"/></svg></div>
<div class="c" style="left:1802px;width:52px;"><div style="border:1px solid #f00;border-radius:2px;background:#fff;color:#f00;font-size:9.5px;line-height:16px;height:18px;width:44px;-webkit-text-stroke:0;position:relative;top:.5px"><span style="display:inline-block;transform:scaleX(.97);transform-origin:50% 50%;position:relative;top:2px;-webkit-text-stroke:.2px #f00">CURFEW</span></div></div>
<div class="c" style="left:1854px;width:45px;"><svg style="position:relative;left:.25px;top:.5px" width="12.3" height="16.200" viewBox="0 0 13 17"><path d="M4.800 2.200v-1c0-.5.300-.8.800-.8h1.800c.5 0 .8.300.8.800v1" fill="none" stroke="#0a0a0a" stroke-width="1.100"/><path d="M1.400 2.300h10.200c.7 0 1.100.5 1.100 1.100v.7c0 .3-.2.500-.5.500h-11.400c-.3 0-.5-.2-.5-.5v-.7c0-.6.4-1.100 1.100-1.100z" fill="#0a0a0a"/><path d="M1.200 5.600h10.600l-.6 9.400c-.1.900-.7 1.500-1.600 1.500h-6.200c-.9 0-1.500-.6-1.600-1.500z" fill="#0a0a0a"/></svg></div>
</div>
<div class="row o" style="top:297px">
<div class="c" style="left:0px;width:52px;padding-right:1.5px;"><span style="margin-right:-3px;color:#777;-webkit-text-stroke:0">VH</span><span class="bl" style="width:28px;height:6px;background:#a8a8a8;filter:blur(2.2px);"></span></div>
<div class="c" style="left:52px;width:79px;"><span class="bl" style="width:38px;height:6px;background:#b0b0b0;filter:blur(2.2px);"></span></div>
<div class="c" style="left:131px;width:70px;"><span class="bl" style="width:26px;height:6px;background:#b8b8b8;filter:blur(2.4px);"></span></div>
<div class="c" style="left:201px;width:65px;"><span>A</span></div>
<div class="c" style="left:266px;width:62px;"><span class="bl" style="width:16px;height:5px;background:#b0b0b0;filter:blur(2px);"></span></div>
<div class="c" style="left:328px;width:83px;"><span>13 Dec 00:05</span></div>
<div class="c" style="left:411px;width:52px;"><span>13 Dec<br>01:04</span></div>
<div class="c" style="left:463px;width:85px;"><span style="margin-right:-2px;margin-left:3px">13 Dec</span><span class="bl" style="width:31px;height:7px;background:#cbcbcb;filter:blur(1.6px);"></span></div>
<div class="c" style="left:548px;width:67px;"><span>YSSY</span></div>
<div class="c" style="left:615px;width:74px;"><span>16R</span></div>
<div class="c" style="left:689px;width:52px;"><span>YBBN</span></div>
<div class="c" style="left:741px;width:62px;"><span>01R</span></div>
<div class="c" style="left:803px;width:55px;"><span style="filter:blur(.45px);color:#787878;-webkit-text-stroke:.1px #787878">13 Dec<br><span class="bl" style="width:28px;height:6px;background:#a4a4a4;filter:blur(1.8px);"></span></span></div>
<div class="c" style="left:858px;width:53px;"><span>13 Dec<br>02:27</span></div>
<div class="c" style="left:911px;width:73px;"><span>13 Dec 01:35</span></div>
<div class="c" style="left:984px;width:49px;"><span>63</span></div>
<div class="c" style="left:1033px;width:48px;"><span>74</span></div>
<div class="c" style="left:1081px;width:42px;"><span>9</span></div>
<div class="c" style="left:1123px;width:48px;"><span>83</span></div>
<div class="c" style="left:1171px;width:67px;justify-content:flex-start;padding-left:0"><span class="bl" style="width:56px;height:6px;background:#b2b2b2;filter:blur(1.9px);"></span></div>
<div class="c" style="left:1238px;width:73px;justify-content:flex-start;padding-left:3px"><span class="bl" style="width:30px;height:6px;background:#a9a9a9;filter:blur(2px);"></span></div>
<div class="c" style="left:1311px;width:72px;"><span>0</span></div>
<div class="c" style="left:1383px;width:70px;"><span>13 Dec 01:04</span></div>
<div class="c" style="left:1453px;width:55px;"><span>13 Dec<br>02:27</span></div>
<div class="c" style="left:1508px;width:63px;"><span>83</span></div>
<div class="c" style="left:1571px;width:54px;"></div>
<div class="c" style="left:1625px;width:26px;padding-bottom:0"><svg style="position:relative;left:.2px;top:.9px" width="17" height="17" viewBox="0 0 17 17"><path d="M0.2 16.3L1.700 11.200 12.700 0.400Q13.600-.2 14.400.600L15.700 1.900Q16.400 2.700 15.900 3.600L5 14.600Z" fill="#0a0a0a"/><path d="M2 10.900l3.300 3.300" stroke="#fff" stroke-width=".9"/><path d="M10.800 3.300l2.500 2.500M11.900 2.300l2.500 2.500M12.900 1.300l2.500 2.500" stroke="#cfcfcf" stroke-width=".55"/></svg></div>
<div class="c" style="left:1651px;width:34px;overflow:visible"><svg style="position:relative;left:-.9px;top:-.1px" width="15" height="17" viewBox="0 0 15 17"><path d="M7.500 2.500v12M1.500 8.500h11.900" stroke="#050505" stroke-width="4.200" stroke-linecap="round" fill="none"/></svg><svg style="position:absolute;left:20px;top:4.8px" width="8" height="14" viewBox="0 0 8 14"><rect width="8" height="14" rx="3.600" fill="#0b8a0b"/><path d="M2.600 5.200L4.700 4.200V10.200" fill="none" stroke="#fff" stroke-width="1.250"/></svg></div>
<div class="c" style="left:1685px;width:48px;"><svg style="position:relative;left:.5px;top:1px" width="15" height="17" viewBox="0 0 15 17"><path d="M0.5 0.5h10.500l3.500 3.500v12.100h-14z" fill="#0a0a0a"/><g fill="#fff"><rect x="1.800" y="3.900" width="1.800" height="2"/><rect x="4.600" y="3.900" width="8.400" height="2"/><rect x="1.800" y="7.700" width="1.800" height="2"/><rect x="4.600" y="7.700" width="8.400" height="2"/><rect x="1.800" y="11.500" width="1.800" height="2"/><rect x="4.600" y="11.500" width="8.400" height="2"/></g></svg></div>
<div class="c" style="left:1733px;width:69px;"><svg width="20" height="18" viewBox="0 0 20 18"><rect x=".7" y=".7" width="18.600" height="16.600" fill="#fff" stroke="#0a0a0a" stroke-width="1.400"/><path d="M2 3.500l3 .3.300.9-1.600 1.300-1.700-.6zM2 8.200l2.300-.9 2.200 1.500-.4 1.800-1.500 1.200-.6 2.300-1.200-.2-.5-2.700zM8.200 5l1.200-1.800 2.600-.9 1.100.7 2.300-.9 2.700.3v3.800l-1.200 2.200-1.200-.9-.7 2-1.600 1-.4 2.600-1.500.4-1-2.700.2-1.900-1.700-.9-.8-1.700zM14.600 13.600l3-2.600v4.200h-3.200z" fill="#0a0a0a"/><path d="M10.400 5.200h2.600" stroke="#fff" stroke-width=".8"/><path d="M2 13.800l.8.900M16.800 3.200l.8-.5" stroke="#0a0a0a" stroke-width=".7"/></svg></div>
<div class="c" style="left:1802px;width:52px;"></div>
<div class="c" style="left:1854px;width:45px;"><svg style="position:relative;left:.25px;top:.5px" width="12.3" height="16.200" viewBox="0 0 13 17"><path d="M4.800 2.200v-1c0-.5.300-.8.800-.8h1.800c.5 0 .8.300.8.800v1" fill="none" stroke="#0a0a0a" stroke-width="1.100"/><path d="M1.400 2.300h10.200c.7 0 1.100.5 1.100 1.100v.7c0 .3-.2.500-.5.500h-11.400c-.3 0-.5-.2-.5-.5v-.7c0-.6.4-1.100 1.100-1.100z" fill="#0a0a0a"/><path d="M1.200 5.600h10.600l-.6 9.400c-.1.900-.7 1.500-1.600 1.500h-6.200c-.9 0-1.500-.6-1.600-1.500z" fill="#0a0a0a"/></svg></div>
</div>
<div class="row e" style="top:330px">
<div class="c" style="left:0px;width:52px;padding-right:1.5px;"><span style="margin-right:-3px;color:#777;-webkit-text-stroke:0">VH</span><span class="bl" style="width:26px;height:6px;background:#a8a8a8;filter:blur(2.2px);"></span></div>
<div class="c" style="left:52px;width:79px;"><span class="bl" style="width:44px;height:6px;background:#b0b0b0;filter:blur(2.2px);"></span></div>
<div class="c" style="left:131px;width:70px;"><span class="bl" style="width:28px;height:6px;background:#b8b8b8;filter:blur(2.4px);"></span></div>
<div class="c" style="left:201px;width:65px;"><span>H</span></div>
<div class="c" style="left:266px;width:62px;"><span class="bl" style="width:14px;height:5px;background:#b0b0b0;filter:blur(2px);"></span></div>
<div class="c" style="left:328px;width:83px;"><span>12 Dec 22:40</span></div>
<div class="c" style="left:411px;width:52px;"><span>13 Dec<br>00:10</span></div>
<div class="c" style="left:463px;width:85px;"><span style="margin-right:-2px;margin-left:3px">13 Dec</span><span class="bl" style="width:31px;height:7px;background:#cbcbcb;filter:blur(1.6px);"></span></div>
<div class="c" style="left:548px;width:67px;"><span>YSSY</span></div>
<div class="c" style="left:615px;width:74px;"><span>16R</span></div>
<div class="c" style="left:689px;width:52px;"><span>YMML</span></div>
<div class="c" style="left:741px;width:62px;"><span>27</span></div>
<div class="c" style="left:803px;width:55px;"><span style="filter:blur(.45px);color:#787878;-webkit-text-stroke:.1px #787878">13 Dec<br><span class="bl" style="width:28px;height:6px;background:#a4a4a4;filter:blur(1.8px);"></span></span></div>
<div class="c" style="left:858px;width:53px;"><span>13 Dec<br>01:55</span></div>
<div class="c" style="left:911px;width:73px;"><span>13 Dec 00:15</span></div>
<div class="c" style="left:984px;width:49px;"><span>103</span></div>
<div class="c" style="left:1033px;width:48px;"><span>85</span></div>
<div class="c" style="left:1081px;width:42px;"><span>19</span></div>
<div class="c" style="left:1123px;width:48px;"><span>105</span></div>
<div class="c" style="left:1171px;width:67px;justify-content:flex-start;padding-left:0"><span class="bl" style="width:52px;height:6px;background:#b2b2b2;filter:blur(1.9px);"></span></div>
<div class="c" style="left:1238px;width:73px;justify-content:flex-start;padding-left:3px"><span class="bl" style="width:42px;height:6px;background:#a9a9a9;filter:blur(2px);"></span></div>
<div class="c" style="left:1311px;width:72px;"><span>0</span></div>
<div class="c" style="left:1383px;width:70px;"><span>13 Dec 00:10</span></div>
<div class="c" style="left:1453px;width:55px;"><span>13 Dec<br>01:55</span></div>
<div class="c" style="left:1508px;width:63px;"><span>105</span></div>
<div class="c" style="left:1571px;width:54px;"></div>
<div class="c" style="left:1625px;width:26px;padding-bottom:0"><svg style="position:relative;left:.2px;top:.9px" width="17" height="17" viewBox="0 0 17 17"><path d="M0.2 16.3L1.700 11.200 12.700 0.400Q13.600-.2 14.400.600L15.700 1.900Q16.400 2.700 15.900 3.600L5 14.600Z" fill="#0a0a0a"/><path d="M2 10.900l3.300 3.300" stroke="#fff" stroke-width=".9"/><path d="M10.800 3.300l2.500 2.500M11.900 2.300l2.500 2.500M12.900 1.300l2.500 2.500" stroke="#cfcfcf" stroke-width=".55"/></svg></div>
<div class="c" style="left:1651px;width:34px;overflow:visible"><svg style="position:relative;left:-.9px;top:-.1px" width="15" height="17" viewBox="0 0 15 17"><path d="M7.500 2.500v12M1.500 8.500h11.900" stroke="#050505" stroke-width="4.200" stroke-linecap="round" fill="none"/></svg><svg style="position:absolute;left:20px;top:4.8px" width="8" height="14" viewBox="0 0 8 14"><rect width="8" height="14" rx="3.600" fill="#0b8a0b"/><path d="M2.600 5.200L4.700 4.200V10.200" fill="none" stroke="#fff" stroke-width="1.250"/></svg></div>
<div class="c" style="left:1685px;width:48px;"><svg style="position:relative;left:.5px;top:1px" width="15" height="17" viewBox="0 0 15 17"><path d="M0.5 0.5h10.500l3.500 3.500v12.100h-14z" fill="#0a0a0a"/><g fill="#fff"><rect x="1.800" y="3.900" width="1.800" height="2"/><rect x="4.600" y="3.900" width="8.400" height="2"/><rect x="1.800" y="7.700" width="1.800" height="2"/><rect x="4.600" y="7.700" width="8.400" height="2"/><rect x="1.800" y="11.500" width="1.800" height="2"/><rect x="4.600" y="11.500" width="8.400" height="2"/></g></svg></div>
<div class="c" style="left:1733px;width:69px;"><svg width="20" height="18" viewBox="0 0 20 18"><rect x=".7" y=".7" width="18.600" height="16.600" fill="#fff" stroke="#0a0a0a" stroke-width="1.400"/><path d="M2 3.500l3 .3.300.9-1.600 1.300-1.700-.6zM2 8.200l2.300-.9 2.200 1.500-.4 1.800-1.500 1.200-.6 2.300-1.200-.2-.5-2.700zM8.200 5l1.200-1.800 2.600-.9 1.100.7 2.300-.9 2.700.3v3.800l-1.200 2.200-1.200-.9-.7 2-1.600 1-.4 2.600-1.500.4-1-2.700.2-1.900-1.700-.9-.8-1.700zM14.600 13.600l3-2.600v4.200h-3.200z" fill="#0a0a0a"/><path d="M10.400 5.200h2.600" stroke="#fff" stroke-width=".8"/><path d="M2 13.800l.8.900M16.800 3.200l.8-.5" stroke="#0a0a0a" stroke-width=".7"/></svg></div>
<div class="c" style="left:1802px;width:52px;"></div>
<div class="c" style="left:1854px;width:45px;"><svg style="position:relative;left:.25px;top:.5px" width="12.3" height="16.200" viewBox="0 0 13 17"><path d="M4.800 2.200v-1c0-.5.300-.8.800-.8h1.800c.5 0 .8.300.8.800v1" fill="none" stroke="#0a0a0a" stroke-width="1.100"/><path d="M1.400 2.300h10.200c.7 0 1.100.5 1.100 1.100v.7c0 .3-.2.500-.5.500h-11.400c-.3 0-.5-.2-.5-.5v-.7c0-.6.4-1.100 1.100-1.100z" fill="#0a0a0a"/><path d="M1.200 5.600h10.600l-.6 9.400c-.1.900-.7 1.500-1.600 1.500h-6.200c-.9 0-1.500-.6-1.600-1.500z" fill="#0a0a0a"/></svg></div>
</div>
<div class="row o" style="top:363px">
<div class="c" style="left:0px;width:52px;padding-right:1.5px;"><span style="margin-right:-3px;color:#777;-webkit-text-stroke:0">VH</span><span class="bl" style="width:28px;height:6px;background:#a8a8a8;filter:blur(2.2px);"></span></div>
<div class="c" style="left:52px;width:79px;"><span class="bl" style="width:44px;height:6px;background:#b0b0b0;filter:blur(2.2px);"></span></div>
<div class="c" style="left:131px;width:70px;"><span class="bl" style="width:28px;height:6px;background:#b8b8b8;filter:blur(2.4px);"></span></div>
<div class="c" style="left:201px;width:65px;"><span>A</span></div>
<div class="c" style="left:266px;width:62px;"><span class="bl" style="width:16px;height:5px;background:#b0b0b0;filter:blur(2px);"></span></div>
<div class="c" style="left:328px;width:83px;"><span>12 Dec 23:45</span></div>
<div class="c" style="left:411px;width:52px;"><span>12 Dec<br>23:52</span></div>
<div class="c" style="left:463px;width:85px;"><span style="margin-right:-2px;margin-left:3px">13 Dec</span><span class="bl" style="width:31px;height:7px;background:#cbcbcb;filter:blur(1.6px);"></span></div>
<div class="c" style="left:548px;width:67px;"><span>YSBK</span></div>
<div class="c" style="left:615px;width:74px;"><span></span></div>
<div class="c" style="left:689px;width:52px;"><span>YMML</span></div>
<div class="c" style="left:741px;width:62px;"><span>27</span></div>
<div class="c" style="left:803px;width:55px;"><span style="filter:blur(.45px);color:#787878;-webkit-text-stroke:.1px #787878">13 Dec<br><span class="bl" style="width:26px;height:6px;background:#a4a4a4;filter:blur(1.8px);"></span></span></div>
<div class="c" style="left:858px;width:53px;"><span>13 Dec<br>01:30</span></div>
<div class="c" style="left:911px;width:73px;"><span>13 Dec 01:15</span></div>
<div class="c" style="left:984px;width:49px;"><span>17</span></div>
<div class="c" style="left:1033px;width:48px;"><span>82</span></div>
<div class="c" style="left:1081px;width:42px;"><span>16</span></div>
<div class="c" style="left:1123px;width:48px;"><span>98</span></div>
<div class="c" style="left:1171px;width:67px;justify-content:flex-start;padding-left:0"><span class="bl" style="width:56px;height:6px;background:#b2b2b2;filter:blur(1.9px);"></span></div>
<div class="c" style="left:1238px;width:73px;justify-content:flex-start;padding-left:3px"><span class="bl" style="width:37px;height:6px;background:#a9a9a9;filter:blur(2px);"></span></div>
<div class="c" style="left:1311px;width:72px;"><span>0</span></div>
<div class="c" style="left:1383px;width:70px;"><span>12 Dec 23:52</span></div>
<div class="c" style="left:1453px;width:55px;"><span>13 Dec<br>01:30</span></div>
<div class="c" style="left:1508px;width:63px;"><span>98</span></div>
<div class="c" style="left:1571px;width:54px;"></div>
<div class="c" style="left:1625px;width:26px;padding-bottom:0"><svg style="position:relative;left:.2px;top:.9px" width="17" height="17" viewBox="0 0 17 17"><path d="M0.2 16.3L1.700 11.200 12.700 0.400Q13.600-.2 14.400.600L15.700 1.900Q16.400 2.700 15.900 3.600L5 14.600Z" fill="#0a0a0a"/><path d="M2 10.900l3.300 3.300" stroke="#fff" stroke-width=".9"/><path d="M10.800 3.300l2.500 2.500M11.900 2.300l2.500 2.500M12.900 1.300l2.500 2.500" stroke="#cfcfcf" stroke-width=".55"/></svg></div>
<div class="c" style="left:1651px;width:34px;overflow:visible"><svg style="position:relative;left:-.9px;top:-.1px" width="15" height="17" viewBox="0 0 15 17"><path d="M7.500 2.500v12M1.500 8.500h11.900" stroke="#050505" stroke-width="4.200" stroke-linecap="round" fill="none"/></svg><svg style="position:absolute;left:20px;top:4.8px" width="8" height="14" viewBox="0 0 8 14"><rect width="8" height="14" rx="3.600" fill="#0b8a0b"/><path d="M2.600 5.200L4.700 4.200V10.200" fill="none" stroke="#fff" stroke-width="1.250"/></svg></div>
<div class="c" style="left:1685px;width:48px;"><svg style="position:relative;left:.5px;top:1px" width="15" height="17" viewBox="0 0 15 17"><path d="M0.5 0.5h10.500l3.500 3.500v12.100h-14z" fill="#0a0a0a"/><g fill="#fff"><rect x="1.800" y="3.900" width="1.800" height="2"/><rect x="4.600" y="3.900" width="8.400" height="2"/><rect x="1.800" y="7.700" width="1.800" height="2"/><rect x="4.600" y="7.700" width="8.400" height="2"/><rect x="1.800" y="11.500" width="1.800" height="2"/><rect x="4.600" y="11.500" width="8.400" height="2"/></g></svg></div>
<div class="c" style="left:1733px;width:69px;"><svg width="20" height="18" viewBox="0 0 20 18"><rect x=".7" y=".7" width="18.600" height="16.600" fill="#fff" stroke="#0a0a0a" stroke-width="1.400"/><path d="M2 3.500l3 .3.300.9-1.600 1.300-1.700-.6zM2 8.200l2.300-.9 2.200 1.500-.4 1.800-1.500 1.200-.6 2.300-1.200-.2-.5-2.700zM8.200 5l1.200-1.800 2.600-.9 1.100.7 2.300-.9 2.700.3v3.800l-1.200 2.200-1.200-.9-.7 2-1.600 1-.4 2.600-1.500.4-1-2.700.2-1.900-1.700-.9-.8-1.700zM14.600 13.600l3-2.600v4.200h-3.200z" fill="#0a0a0a"/><path d="M10.400 5.200h2.600" stroke="#fff" stroke-width=".8"/><path d="M2 13.800l.8.900M16.800 3.200l.8-.5" stroke="#0a0a0a" stroke-width=".7"/></svg></div>
<div class="c" style="left:1802px;width:52px;"></div>
<div class="c" style="left:1854px;width:45px;"><svg style="position:relative;left:.25px;top:.5px" width="12.3" height="16.200" viewBox="0 0 13 17"><path d="M4.800 2.200v-1c0-.5.300-.8.800-.8h1.800c.5 0 .8.300.8.800v1" fill="none" stroke="#0a0a0a" stroke-width="1.100"/><path d="M1.400 2.300h10.200c.7 0 1.100.5 1.100 1.100v.7c0 .3-.2.500-.5.500h-11.400c-.3 0-.5-.2-.5-.5v-.7c0-.6.4-1.100 1.100-1.100z" fill="#0a0a0a"/><path d="M1.200 5.600h10.600l-.6 9.400c-.1.900-.7 1.500-1.600 1.500h-6.200c-.9 0-1.500-.6-1.600-1.500z" fill="#0a0a0a"/></svg></div>
</div>
<div class="row e" style="top:396px">
<div class="c" style="left:0px;width:52px;padding-right:1.5px;"><span style="margin-right:-3px;color:#777;-webkit-text-stroke:0">VH</span><span class="bl" style="width:24px;height:6px;background:#a8a8a8;filter:blur(2.2px);"></span></div>
<div class="c" style="left:52px;width:79px;"><span class="bl" style="width:34px;height:6px;background:#b0b0b0;filter:blur(2.2px);"></span></div>
<div class="c" style="left:131px;width:70px;"><span class="bl" style="width:26px;height:6px;background:#b8b8b8;filter:blur(2.4px);"></span></div>
<div class="c" style="left:201px;width:65px;"><span>H</span></div>
<div class="c" style="left:266px;width:62px;"><span class="bl" style="width:16px;height:5px;background:#b0b0b0;filter:blur(2px);"></span></div>
<div class="c" style="left:328px;width:83px;"><span>12 Dec 21:40</span></div>
<div class="c" style="left:411px;width:52px;"><span>12 Dec<br>23:46</span></div>
<div class="c" style="left:463px;width:85px;"><span style="margin-right:-2px;margin-left:3px">12 Dec</span><span class="bl" style="width:31px;height:7px;background:#cbcbcb;filter:blur(1.6px);"></span></div>
<div class="c" style="left:548px;width:67px;"><span>YSSY</span></div>
<div class="c" style="left:615px;width:74px;"><span>16R</span></div>
<div class="c" style="left:689px;width:52px;"><span>YMML</span></div>
<div class="c" style="left:741px;width:62px;"><span>27</span></div>
<div class="c" style="left:803px;width:55px;"><span style="filter:blur(.45px);color:#787878;-webkit-text-stroke:.1px #787878">13 Dec<br><span class="bl" style="width:26px;height:6px;background:#a4a4a4;filter:blur(1.8px);"></span></span></div>
<div class="c" style="left:858px;width:53px;"><span>13 Dec<br>01:21</span></div>
<div class="c" style="left:911px;width:73px;"><span>12 Dec 23:15</span></div>
<div class="c" style="left:984px;width:49px;"><span>131</span></div>
<div class="c" style="left:1033px;width:48px;"><span>84</span></div>
<div class="c" style="left:1081px;width:42px;"><span>11</span></div>
<div class="c" style="left:1123px;width:48px;"><span>95</span></div>
<div class="c" style="left:1171px;width:67px;justify-content:flex-start;padding-left:0"><span class="bl" style="width:52px;height:6px;background:#b2b2b2;filter:blur(1.9px);"></span></div>
<div class="c" style="left:1238px;width:73px;justify-content:flex-start;padding-left:3px"><span class="bl" style="width:30px;height:6px;background:#a9a9a9;filter:blur(2px);"></span></div>
<div class="c" style="left:1311px;width:72px;"><span>0</span></div>
<div class="c" style="left:1383px;width:70px;"><span>12 Dec 23:46</span></div>
<div class="c" style="left:1453px;width:55px;"><span>13 Dec<br>01:21</span></div>
<div class="c" style="left:1508px;width:63px;"><span>95</span></div>
<div class="c" style="left:1571px;width:54px;"></div>
<div class="c" style="left:1625px;width:26px;padding-bottom:0"><svg style="position:relative;left:.2px;top:.9px" width="17" height="17" viewBox="0 0 17 17"><path d="M0.2 16.3L1.700 11.200 12.700 0.400Q13.600-.2 14.400.600L15.700 1.900Q16.400 2.700 15.900 3.600L5 14.600Z" fill="#0a0a0a"/><path d="M2 10.900l3.300 3.300" stroke="#fff" stroke-width=".9"/><path d="M10.800 3.300l2.500 2.500M11.900 2.300l2.500 2.500M12.900 1.300l2.500 2.500" stroke="#cfcfcf" stroke-width=".55"/></svg></div>
<div class="c" style="left:1651px;width:34px;overflow:visible"><svg style="position:relative;left:-.9px;top:-.1px" width="15" height="17" viewBox="0 0 15 17"><path d="M7.500 2.500v12M1.500 8.500h11.900" stroke="#050505" stroke-width="4.200" stroke-linecap="round" fill="none"/></svg><svg style="position:absolute;left:20px;top:4.8px" width="8" height="14" viewBox="0 0 8 14"><rect width="8" height="14" rx="3.600" fill="#0b8a0b"/><path d="M2.600 5.200L4.700 4.200V10.200" fill="none" stroke="#fff" stroke-width="1.250"/></svg></div>
<div class="c" style="left:1685px;width:48px;"><svg style="position:relative;left:.5px;top:1px" width="15" height="17" viewBox="0 0 15 17"><path d="M0.5 0.5h10.500l3.500 3.500v12.100h-14z" fill="#0a0a0a"/><g fill="#fff"><rect x="1.800" y="3.900" width="1.800" height="2"/><rect x="4.600" y="3.900" width="8.400" height="2"/><rect x="1.800" y="7.700" width="1.800" height="2"/><rect x="4.600" y="7.700" width="8.400" height="2"/><rect x="1.800" y="11.500" width="1.800" height="2"/><rect x="4.600" y="11.500" width="8.400" height="2"/></g></svg></div>
<div class="c" style="left:1733px;width:69px;"><svg width="20" height="18" viewBox="0 0 20 18"><rect x=".7" y=".7" width="18.600" height="16.600" fill="#fff" stroke="#0a0a0a" stroke-width="1.400"/><path d="M2 3.500l3 .3.300.9-1.600 1.300-1.700-.6zM2 8.200l2.300-.9 2.200 1.500-.4 1.800-1.500 1.200-.6 2.300-1.200-.2-.5-2.700zM8.200 5l1.200-1.800 2.600-.9 1.100.7 2.300-.9 2.700.3v3.800l-1.200 2.200-1.200-.9-.7 2-1.600 1-.4 2.600-1.500.4-1-2.700.2-1.900-1.700-.9-.8-1.700zM14.600 13.600l3-2.600v4.200h-3.200z" fill="#0a0a0a"/><path d="M10.400 5.200h2.600" stroke="#fff" stroke-width=".8"/><path d="M2 13.800l.8.900M16.800 3.200l.8-.5" stroke="#0a0a0a" stroke-width=".7"/></svg></div>
<div class="c" style="left:1802px;width:52px;"></div>
<div class="c" style="left:1854px;width:45px;"><svg style="position:relative;left:.25px;top:.5px" width="12.3" height="16.200" viewBox="0 0 13 17"><path d="M4.800 2.200v-1c0-.5.300-.8.800-.8h1.800c.5 0 .8.300.8.800v1" fill="none" stroke="#0a0a0a" stroke-width="1.100"/><path d="M1.400 2.300h10.200c.7 0 1.100.5 1.100 1.100v.7c0 .3-.2.500-.5.500h-11.400c-.3 0-.5-.2-.5-.5v-.7c0-.6.4-1.100 1.100-1.100z" fill="#0a0a0a"/><path d="M1.200 5.600h10.600l-.6 9.400c-.1.900-.7 1.500-1.600 1.500h-6.200c-.9 0-1.500-.6-1.600-1.500z" fill="#0a0a0a"/></svg></div>
</div>
<div class="row o" style="top:429px">
<div class="c" style="left:0px;width:52px;padding-right:1.5px;"><span style="margin-right:-3px;color:#777;-webkit-text-stroke:0">VH</span><span class="bl" style="width:26px;height:6px;background:#a8a8a8;filter:blur(2.2px);"></span></div>
<div class="c" style="left:52px;width:79px;"><span class="bl" style="width:44px;height:6px;background:#b0b0b0;filter:blur(2.2px);"></span></div>
<div class="c" style="left:131px;width:70px;"><span class="bl" style="width:24px;height:6px;background:#b8b8b8;filter:blur(2.4px);"></span></div>
<div class="c" style="left:201px;width:65px;"><span>A</span></div>
<div class="c" style="left:266px;width:62px;"><span class="bl" style="width:14px;height:5px;background:#b0b0b0;filter:blur(2px);"></span></div>
<div class="c" style="left:328px;width:83px;"><span>12 Dec 21:15</span></div>
<div class="c" style="left:411px;width:52px;"><span>12 Dec<br>21:32</span></div>
<div class="c" style="left:463px;width:85px;"><span style="margin-right:-2px;margin-left:3px">12 Dec</span><span class="bl" style="width:31px;height:7px;background:#cbcbcb;filter:blur(1.6px);"></span></div>
<div class="c" style="left:548px;width:67px;"><span>YBBN</span></div>
<div class="c" style="left:615px;width:74px;"><span>01R</span></div>
<div class="c" style="left:689px;width:52px;"><span>YSSY</span></div>
<div class="c" style="left:741px;width:62px;"><span>34L</span></div>
<div class="c" style="left:803px;width:55px;"><span style="filter:blur(.45px);color:#787878;-webkit-text-stroke:.1px #787878">12 Dec<br><span class="bl" style="width:28px;height:6px;background:#a4a4a4;filter:blur(1.8px);"></span></span></div>
<div class="c" style="left:858px;width:53px;"><span>12 Dec<br>23:27</span></div>
<div class="c" style="left:911px;width:73px;"><span>12 Dec 22:45</span></div>
<div class="c" style="left:984px;width:49px;"><span>21</span></div>
<div class="c" style="left:1033px;width:48px;"><span>107</span></div>
<div class="c" style="left:1081px;width:42px;"><span>8</span></div>
<div class="c" style="left:1123px;width:48px;"><span>115</span></div>
<div class="c" style="left:1171px;width:67px;justify-content:flex-start;padding-left:0"><span class="bl" style="width:60px;height:6px;background:#b2b2b2;filter:blur(1.9px);"></span></div>
<div class="c" style="left:1238px;width:73px;justify-content:flex-start;padding-left:3px"><span class="bl" style="width:27px;height:6px;background:#a9a9a9;filter:blur(2px);"></span></div>
<div class="c" style="left:1311px;width:72px;"><span>0</span></div>
<div class="c" style="left:1383px;width:70px;"><span>12 Dec 21:32</span></div>
<div class="c" style="left:1453px;width:55px;"><span>12 Dec<br>23:27</span></div>
<div class="c" style="left:1508px;width:63px;"><span>115</span></div>
<div class="c" style="left:1571px;width:54px;"></div>
<div class="c" style="left:1625px;width:26px;padding-bottom:0"><svg style="position:relative;left:.2px;top:.9px" width="17" height="17" viewBox="0 0 17 17"><path d="M0.2 16.3L1.700 11.200 12.700 0.400Q13.600-.2 14.400.600L15.700 1.900Q16.400 2.700 15.900 3.600L5 14.600Z" fill="#0a0a0a"/><path d="M2 10.900l3.300 3.300" stroke="#fff" stroke-width=".9"/><path d="M10.800 3.300l2.500 2.500M11.900 2.300l2.500 2.500M12.900 1.300l2.500 2.500" stroke="#cfcfcf" stroke-width=".55"/></svg></div>
<div class="c" style="left:1651px;width:34px;overflow:visible"><svg style="position:relative;left:-.9px;top:-.1px" width="15" height="17" viewBox="0 0 15 17"><path d="M7.500 2.500v12M1.500 8.500h11.900" stroke="#050505" stroke-width="4.200" stroke-linecap="round" fill="none"/></svg><svg style="position:absolute;left:20px;top:4.8px" width="8" height="14" viewBox="0 0 8 14"><rect width="8" height="14" rx="3.600" fill="#0b8a0b"/><path d="M2.600 5.200L4.700 4.200V10.200" fill="none" stroke="#fff" stroke-width="1.250"/></svg></div>
<div class="c" style="left:1685px;width:48px;"><svg style="position:relative;left:.5px;top:1px" width="15" height="17" viewBox="0 0 15 17"><path d="M0.5 0.5h10.500l3.500 3.500v12.100h-14z" fill="#0a0a0a"/><g fill="#fff"><rect x="1.800" y="3.900" width="1.800" height="2"/><rect x="4.600" y="3.900" width="8.400" height="2"/><rect x="1.800" y="7.700" width="1.800" height="2"/><rect x="4.600" y="7.700" width="8.400" height="2"/><rect x="1.800" y="11.500" width="1.800" height="2"/><rect x="4.600" y="11.500" width="8.400" height="2"/></g></svg></div>
<div class="c" style="left:1733px;width:69px;"><svg width="20" height="18" viewBox="0 0 20 18"><rect x=".7" y=".7" width="18.600" height="16.600" fill="#fff" stroke="#0a0a0a" stroke-width="1.400"/><path d="M2 3.500l3 .3.300.9-1.600 1.300-1.700-.6zM2 8.200l2.300-.9 2.200 1.500-.4 1.800-1.500 1.200-.6 2.300-1.200-.2-.5-2.700zM8.200 5l1.200-1.800 2.600-.9 1.100.7 2.300-.9 2.700.3v3.800l-1.200 2.200-1.200-.9-.7 2-1.600 1-.4 2.600-1.500.4-1-2.700.2-1.900-1.700-.9-.8-1.700zM14.600 13.600l3-2.600v4.200h-3.200z" fill="#0a0a0a"/><path d="M10.400 5.200h2.600" stroke="#fff" stroke-width=".8"/><path d="M2 13.800l.8.900M16.800 3.200l.8-.5" stroke="#0a0a0a" stroke-width=".7"/></svg></div>
<div class="c" style="left:1802px;width:52px;"></div>
<div class="c" style="left:1854px;width:45px;"><svg style="position:relative;left:.25px;top:.5px" width="12.3" height="16.200" viewBox="0 0 13 17"><path d="M4.800 2.200v-1c0-.5.300-.8.800-.8h1.800c.5 0 .8.300.8.800v1" fill="none" stroke="#0a0a0a" stroke-width="1.100"/><path d="M1.400 2.300h10.200c.7 0 1.100.5 1.100 1.100v.7c0 .3-.2.500-.5.500h-11.400c-.3 0-.5-.2-.5-.5v-.7c0-.6.4-1.100 1.100-1.100z" fill="#0a0a0a"/><path d="M1.200 5.600h10.600l-.6 9.400c-.1.900-.7 1.500-1.600 1.500h-6.200c-.9 0-1.500-.6-1.600-1.500z" fill="#0a0a0a"/></svg></div>
</div>
<div class="row e" style="top:462px">
<div class="c" style="left:0px;width:52px;padding-right:1.5px;"><span style="margin-right:-3px;color:#777;-webkit-text-stroke:0">VH</span><span class="bl" style="width:22px;height:6px;background:#a8a8a8;filter:blur(2.2px);"></span></div>
<div class="c" style="left:52px;width:79px;"><span class="bl" style="width:36px;height:6px;background:#b0b0b0;filter:blur(2.2px);"></span></div>
<div class="c" style="left:131px;width:70px;"><span class="bl" style="width:22px;height:6px;background:#b8b8b8;filter:blur(2.4px);"></span></div>
<div class="c" style="left:201px;width:65px;"><span>H</span></div>
<div class="c" style="left:266px;width:62px;"><span class="bl" style="width:16px;height:5px;background:#b0b0b0;filter:blur(2px);"></span></div>
<div class="c" style="left:328px;width:83px;"><span>12 Dec 20:30</span></div>
<div class="c" style="left:411px;width:52px;"><span>12 Dec<br>20:50</span></div>
<div class="c" style="left:463px;width:85px;"><span style="margin-right:-2px;margin-left:3px">12 Dec</span><span class="bl" style="width:31px;height:7px;background:#cbcbcb;filter:blur(1.6px);"></span></div>
<div class="c" style="left:548px;width:67px;"><span>YBBN</span></div>
<div class="c" style="left:615px;width:74px;"><span>01R</span></div>
<div class="c" style="left:689px;width:52px;"><span>YSSY</span></div>
<div class="c" style="left:741px;width:62px;"><span>34L</span></div>
<div class="c" style="left:803px;width:55px;"><span style="filter:blur(.45px);color:#787878;-webkit-text-stroke:.1px #787878">12 Dec<br><span class="bl" style="width:26px;height:6px;background:#a4a4a4;filter:blur(1.8px);"></span></span></div>
<div class="c" style="left:858px;width:53px;"><span>12 Dec<br>22:58</span></div>
<div class="c" style="left:911px;width:73px;"><span>12 Dec 22:10</span></div>
<div class="c" style="left:984px;width:49px;"><span>39</span></div>
<div class="c" style="left:1033px;width:48px;"><span>104</span></div>
<div class="c" style="left:1081px;width:42px;"><span>25</span></div>
<div class="c" style="left:1123px;width:48px;"><span>128</span></div>
<div class="c" style="left:1171px;width:67px;justify-content:flex-start;padding-left:0"><span class="bl" style="width:56px;height:6px;background:#b2b2b2;filter:blur(1.9px);"></span></div>
<div class="c" style="left:1238px;width:73px;justify-content:flex-start;padding-left:3px"><span class="bl" style="width:37px;height:6px;background:#a9a9a9;filter:blur(2px);"></span></div>
<div class="c" style="left:1311px;width:72px;"><span>0</span></div>
<div class="c" style="left:1383px;width:70px;"><span>12 Dec 20:50</span></div>
<div class="c" style="left:1453px;width:55px;"><span>12 Dec<br>22:58</span></div>
<div class="c" style="left:1508px;width:63px;"><span>128</span></div>
<div class="c" style="left:1571px;width:54px;"></div>
<div class="c" style="left:1625px;width:26px;padding-bottom:0"><svg style="position:relative;left:.2px;top:.9px" width="17" height="17" viewBox="0 0 17 17"><path d="M0.2 16.3L1.700 11.200 12.700 0.400Q13.600-.2 14.400.600L15.700 1.900Q16.400 2.700 15.900 3.600L5 14.600Z" fill="#0a0a0a"/><path d="M2 10.900l3.300 3.300" stroke="#fff" stroke-width=".9"/><path d="M10.800 3.300l2.500 2.500M11.900 2.300l2.500 2.500M12.900 1.300l2.500 2.500" stroke="#cfcfcf" stroke-width=".55"/></svg></div>
<div class="c" style="left:1651px;width:34px;overflow:visible"><svg style="position:relative;left:-.9px;top:-.1px" width="15" height="17" viewBox="0 0 15 17"><path d="M7.500 2.500v12M1.500 8.500h11.900" stroke="#050505" stroke-width="4.200" stroke-linecap="round" fill="none"/></svg><svg style="position:absolute;left:20px;top:4.8px" width="8" height="14" viewBox="0 0 8 14"><rect width="8" height="14" rx="3.600" fill="#0b8a0b"/><path d="M2.600 5.200L4.700 4.200V10.200" fill="none" stroke="#fff" stroke-width="1.250"/></svg></div>
<div class="c" style="left:1685px;width:48px;"><svg style="position:relative;left:.5px;top:1px" width="15" height="17" viewBox="0 0 15 17"><path d="M0.5 0.5h10.500l3.500 3.500v12.100h-14z" fill="#0a0a0a"/><g fill="#fff"><rect x="1.800" y="3.900" width="1.800" height="2"/><rect x="4.600" y="3.900" width="8.400" height="2"/><rect x="1.800" y="7.700" width="1.800" height="2"/><rect x="4.600" y="7.700" width="8.400" height="2"/><rect x="1.800" y="11.500" width="1.800" height="2"/><rect x="4.600" y="11.500" width="8.400" height="2"/></g></svg></div>
<div class="c" style="left:1733px;width:69px;"><svg width="20" height="18" viewBox="0 0 20 18"><rect x=".7" y=".7" width="18.600" height="16.600" fill="#fff" stroke="#0a0a0a" stroke-width="1.400"/><path d="M2 3.500l3 .3.300.9-1.600 1.300-1.700-.6zM2 8.200l2.300-.9 2.200 1.500-.4 1.800-1.500 1.200-.6 2.300-1.200-.2-.5-2.700zM8.200 5l1.200-1.800 2.600-.9 1.100.7 2.300-.9 2.700.3v3.800l-1.200 2.200-1.200-.9-.7 2-1.600 1-.4 2.600-1.500.4-1-2.700.2-1.900-1.700-.9-.8-1.700zM14.600 13.600l3-2.600v4.200h-3.200z" fill="#0a0a0a"/><path d="M10.400 5.200h2.600" stroke="#fff" stroke-width=".8"/><path d="M2 13.800l.8.900M16.800 3.200l.8-.5" stroke="#0a0a0a" stroke-width=".7"/></svg></div>
<div class="c" style="left:1802px;width:52px;"></div>
<div class="c" style="left:1854px;width:45px;"><svg style="position:relative;left:.25px;top:.5px" width="12.3" height="16.200" viewBox="0 0 13 17"><path d="M4.800 2.200v-1c0-.5.300-.8.800-.8h1.800c.5 0 .8.300.8.800v1" fill="none" stroke="#0a0a0a" stroke-width="1.100"/><path d="M1.400 2.300h10.200c.7 0 1.100.5 1.100 1.100v.7c0 .3-.2.500-.5.500h-11.400c-.3 0-.5-.2-.5-.5v-.7c0-.6.4-1.100 1.100-1.100z" fill="#0a0a0a"/><path d="M1.200 5.600h10.600l-.6 9.400c-.1.900-.7 1.500-1.600 1.500h-6.200c-.9 0-1.500-.6-1.600-1.500z" fill="#0a0a0a"/></svg></div>
</div>
<div class="row o" style="top:495px">
<div class="c" style="left:0px;width:52px;padding-right:1.5px;"><span style="margin-right:-3px;color:#777;-webkit-text-stroke:0">VH</span><span class="bl" style="width:28px;height:6px;background:#a8a8a8;filter:blur(2.2px);"></span></div>
<div class="c" style="left:52px;width:79px;"><span class="bl" style="width:36px;height:6px;background:#b0b0b0;filter:blur(2.2px);"></span></div>
<div class="c" style="left:131px;width:70px;"><span class="bl" style="width:24px;height:6px;background:#b8b8b8;filter:blur(2.4px);"></span></div>
<div class="c" style="left:201px;width:65px;"><span>H</span></div>
<div class="c" style="left:266px;width:62px;"><span class="bl" style="width:18px;height:5px;background:#b0b0b0;filter:blur(2px);"></span></div>
<div class="c" style="left:328px;width:83px;"><span>12 Dec 19:10</span></div>
<div class="c" style="left:411px;width:52px;"><span>12 Dec<br>19:21</span></div>
<div class="c" style="left:463px;width:85px;"><span style="margin-right:-2px;margin-left:3px">12 Dec</span><span class="bl" style="width:31px;height:7px;background:#cbcbcb;filter:blur(1.6px);"></span></div>
<div class="c" style="left:548px;width:67px;"><span>YPAD</span></div>
<div class="c" style="left:615px;width:74px;"><span>23</span></div>
<div class="c" style="left:689px;width:52px;"><span>YSSY</span></div>
<div class="c" style="left:741px;width:62px;"><span>34L</span></div>
<div class="c" style="left:803px;width:55px;"><span style="filter:blur(.45px);color:#787878;-webkit-text-stroke:.1px #787878">12 Dec<br><span class="bl" style="width:24px;height:6px;background:#a4a4a4;filter:blur(1.8px);"></span></span></div>
<div class="c" style="left:858px;width:53px;"><span>12 Dec<br>21:12</span></div>
<div class="c" style="left:911px;width:73px;"><span>12 Dec 21:10</span></div>
<div class="c" style="left:984px;width:49px;"><span>18</span></div>
<div class="c" style="left:1033px;width:48px;"><span>100</span></div>
<div class="c" style="left:1081px;width:42px;"><span>11</span></div>
<div class="c" style="left:1123px;width:48px;"><span>111</span></div>
<div class="c" style="left:1171px;width:67px;justify-content:flex-start;padding-left:0"><span class="bl" style="width:58px;height:6px;background:#b2b2b2;filter:blur(1.9px);"></span></div>
<div class="c" style="left:1238px;width:73px;justify-content:flex-start;padding-left:3px"><span class="bl" style="width:30px;height:6px;background:#a9a9a9;filter:blur(2px);"></span></div>
<div class="c" style="left:1311px;width:72px;"><span>0</span></div>
<div class="c" style="left:1383px;width:70px;"><span>12 Dec 19:21</span></div>
<div class="c" style="left:1453px;width:55px;"><span>12 Dec<br>21:12</span></div>
<div class="c" style="left:1508px;width:63px;"><span>111</span></div>
<div class="c" style="left:1571px;width:54px;"></div>
<div class="c" style="left:1625px;width:26px;padding-bottom:0"><svg style="position:relative;left:.2px;top:.9px" width="17" height="17" viewBox="0 0 17 17"><path d="M0.2 16.3L1.700 11.200 12.700 0.400Q13.600-.2 14.400.600L15.700 1.900Q16.400 2.700 15.900 3.600L5 14.600Z" fill="#0a0a0a"/><path d="M2 10.900l3.300 3.300" stroke="#fff" stroke-width=".9"/><path d="M10.800 3.300l2.500 2.500M11.900 2.300l2.500 2.500M12.900 1.300l2.500 2.500" stroke="#cfcfcf" stroke-width=".55"/></svg></div>
<div class="c" style="left:1651px;width:34px;overflow:visible"><svg style="position:relative;left:-.9px;top:-.1px" width="15" height="17" viewBox="0 0 15 17"><path d="M7.500 2.500v12M1.500 8.500h11.900" stroke="#050505" stroke-width="4.200" stroke-linecap="round" fill="none"/></svg><svg style="position:absolute;left:20px;top:4.8px" width="8" height="14" viewBox="0 0 8 14"><rect width="8" height="14" rx="3.600" fill="#0b8a0b"/><path d="M2.600 5.200L4.700 4.200V10.200" fill="none" stroke="#fff" stroke-width="1.250"/></svg></div>
<div class="c" style="left:1685px;width:48px;"><svg style="position:relative;left:.5px;top:1px" width="15" height="17" viewBox="0 0 15 17"><path d="M0.5 0.5h10.500l3.500 3.500v12.100h-14z" fill="#0a0a0a"/><g fill="#fff"><rect x="1.800" y="3.900" width="1.800" height="2"/><rect x="4.600" y="3.900" width="8.400" height="2"/><rect x="1.800" y="7.700" width="1.800" height="2"/><rect x="4.600" y="7.700" width="8.400" height="2"/><rect x="1.800" y="11.500" width="1.800" height="2"/><rect x="4.600" y="11.500" width="8.400" height="2"/></g></svg></div>
<div class="c" style="left:1733px;width:69px;"><svg width="20" height="18" viewBox="0 0 20 18"><rect x=".7" y=".7" width="18.600" height="16.600" fill="#fff" stroke="#0a0a0a" stroke-width="1.400"/><path d="M2 3.500l3 .3.300.9-1.600 1.300-1.700-.6zM2 8.200l2.300-.9 2.200 1.500-.4 1.800-1.500 1.200-.6 2.300-1.200-.2-.5-2.700zM8.200 5l1.200-1.800 2.600-.9 1.100.7 2.300-.9 2.700.3v3.800l-1.200 2.200-1.200-.9-.7 2-1.600 1-.4 2.600-1.500.4-1-2.700.2-1.900-1.700-.9-.8-1.700zM14.600 13.600l3-2.600v4.200h-3.200z" fill="#0a0a0a"/><path d="M10.400 5.200h2.600" stroke="#fff" stroke-width=".8"/><path d="M2 13.800l.8.900M16.800 3.200l.8-.5" stroke="#0a0a0a" stroke-width=".7"/></svg></div>
<div class="c" style="left:1802px;width:52px;"></div>
<div class="c" style="left:1854px;width:45px;"><svg style="position:relative;left:.25px;top:.5px" width="12.3" height="16.200" viewBox="0 0 13 17"><path d="M4.800 2.200v-1c0-.5.300-.8.800-.8h1.800c.5 0 .8.300.8.800v1" fill="none" stroke="#0a0a0a" stroke-width="1.100"/><path d="M1.400 2.300h10.200c.7 0 1.100.5 1.100 1.100v.7c0 .3-.2.500-.5.500h-11.400c-.3 0-.5-.2-.5-.5v-.7c0-.6.4-1.100 1.100-1.100z" fill="#0a0a0a"/><path d="M1.200 5.600h10.600l-.6 9.400c-.1.900-.7 1.500-1.600 1.500h-6.200c-.9 0-1.500-.6-1.600-1.500z" fill="#0a0a0a"/></svg></div>
</div>
<div class="row e" style="top:528px">
<div class="c" style="left:0px;width:52px;padding-right:1.5px;"><span style="margin-right:-3px;color:#777;-webkit-text-stroke:0">VH</span><span class="bl" style="width:22px;height:6px;background:#a8a8a8;filter:blur(2.2px);"></span></div>
<div class="c" style="left:52px;width:79px;"><span class="bl" style="width:38px;height:6px;background:#b0b0b0;filter:blur(2.2px);"></span></div>
<div class="c" style="left:131px;width:70px;"><span class="bl" style="width:22px;height:6px;background:#b8b8b8;filter:blur(2.4px);"></span></div>
<div class="c" style="left:201px;width:65px;"><span>H</span></div>
<div class="c" style="left:266px;width:62px;"><span class="bl" style="width:14px;height:5px;background:#b0b0b0;filter:blur(2px);"></span></div>
<div class="c" style="left:328px;width:83px;"><span>12 Dec 17:30</span></div>
<div class="c" style="left:411px;width:52px;"><span>12 Dec<br>17:46</span></div>
<div class="c" style="left:463px;width:85px;"><span style="margin-right:-2px;margin-left:3px">12 Dec</span><span class="bl" style="width:31px;height:7px;background:#cbcbcb;filter:blur(1.6px);"></span></div>
<div class="c" style="left:548px;width:67px;"><span>YBCS</span></div>
<div class="c" style="left:615px;width:74px;"><span>33</span></div>
<div class="c" style="left:689px;width:52px;"><span>YBBN</span></div>
<div class="c" style="left:741px;width:62px;"><span>01L</span></div>
<div class="c" style="left:803px;width:55px;"><span style="filter:blur(.45px);color:#787878;-webkit-text-stroke:.1px #787878">12 Dec<br><span class="bl" style="width:28px;height:6px;background:#a4a4a4;filter:blur(1.8px);"></span></span></div>
<div class="c" style="left:858px;width:53px;"><span>12 Dec<br>20:08</span></div>
<div class="c" style="left:911px;width:73px;"><span>12 Dec 20:00</span></div>
<div class="c" style="left:984px;width:49px;"><span>21</span></div>
<div class="c" style="left:1033px;width:48px;"><span>129</span></div>
<div class="c" style="left:1081px;width:42px;"><span>13</span></div>
<div class="c" style="left:1123px;width:48px;"><span>142</span></div>
<div class="c" style="left:1171px;width:67px;justify-content:flex-start;padding-left:0"><span class="bl" style="width:52px;height:6px;background:#b2b2b2;filter:blur(1.9px);"></span></div>
<div class="c" style="left:1238px;width:73px;justify-content:flex-start;padding-left:3px"><span class="bl" style="width:27px;height:6px;background:#a9a9a9;filter:blur(2px);"></span></div>
<div class="c" style="left:1311px;width:72px;"><span>0</span></div>
<div class="c" style="left:1383px;width:70px;"><span>12 Dec 17:46</span></div>
<div class="c" style="left:1453px;width:55px;"><span>12 Dec<br>20:08</span></div>
<div class="c" style="left:1508px;width:63px;"><span>142</span></div>
<div class="c" style="left:1571px;width:54px;"></div>
<div class="c" style="left:1625px;width:26px;padding-bottom:0"><svg style="position:relative;left:.2px;top:.9px" width="17" height="17" viewBox="0 0 17 17"><path d="M0.2 16.3L1.700 11.200 12.700 0.400Q13.600-.2 14.400.600L15.700 1.900Q16.400 2.700 15.900 3.600L5 14.600Z" fill="#0a0a0a"/><path d="M2 10.900l3.300 3.300" stroke="#fff" stroke-width=".9"/><path d="M10.800 3.300l2.500 2.500M11.900 2.300l2.500 2.500M12.900 1.300l2.500 2.500" stroke="#cfcfcf" stroke-width=".55"/></svg></div>
<div class="c" style="left:1651px;width:34px;overflow:visible"><svg style="position:relative;left:-.9px;top:-.1px" width="15" height="17" viewBox="0 0 15 17"><path d="M7.500 2.500v12M1.500 8.500h11.900" stroke="#050505" stroke-width="4.200" stroke-linecap="round" fill="none"/></svg><svg style="position:absolute;left:20px;top:4.8px" width="8" height="14" viewBox="0 0 8 14"><rect width="8" height="14" rx="3.600" fill="#0b8a0b"/><path d="M2.600 5.200L4.700 4.200V10.200" fill="none" stroke="#fff" stroke-width="1.250"/></svg></div>
<div class="c" style="left:1685px;width:48px;"><svg style="position:relative;left:.5px;top:1px" width="15" height="17" viewBox="0 0 15 17"><path d="M0.5 0.5h10.500l3.500 3.500v12.100h-14z" fill="#0a0a0a"/><g fill="#fff"><rect x="1.800" y="3.900" width="1.800" height="2"/><rect x="4.600" y="3.900" width="8.400" height="2"/><rect x="1.800" y="7.700" width="1.800" height="2"/><rect x="4.600" y="7.700" width="8.400" height="2"/><rect x="1.800" y="11.500" width="1.800" height="2"/><rect x="4.600" y="11.500" width="8.400" height="2"/></g></svg></div>
<div class="c" style="left:1733px;width:69px;"><svg width="20" height="18" viewBox="0 0 20 18"><rect x=".7" y=".7" width="18.600" height="16.600" fill="#fff" stroke="#0a0a0a" stroke-width="1.400"/><path d="M2 3.500l3 .3.300.9-1.600 1.300-1.700-.6zM2 8.200l2.300-.9 2.200 1.500-.4 1.800-1.500 1.200-.6 2.300-1.200-.2-.5-2.700zM8.200 5l1.200-1.800 2.600-.9 1.100.7 2.300-.9 2.700.3v3.800l-1.200 2.200-1.200-.9-.7 2-1.600 1-.4 2.600-1.500.4-1-2.700.2-1.900-1.700-.9-.8-1.700zM14.600 13.600l3-2.600v4.200h-3.200z" fill="#0a0a0a"/><path d="M10.400 5.200h2.600" stroke="#fff" stroke-width=".8"/><path d="M2 13.800l.8.900M16.800 3.200l.8-.5" stroke="#0a0a0a" stroke-width=".7"/></svg></div>
<div class="c" style="left:1802px;width:52px;"></div>
<div class="c" style="left:1854px;width:45px;"><svg style="position:relative;left:.25px;top:.5px" width="12.3" height="16.200" viewBox="0 0 13 17"><path d="M4.800 2.200v-1c0-.5.300-.8.800-.8h1.800c.5 0 .8.300.8.800v1" fill="none" stroke="#0a0a0a" stroke-width="1.100"/><path d="M1.400 2.300h10.200c.7 0 1.100.5 1.100 1.100v.7c0 .3-.2.500-.5.500h-11.400c-.3 0-.5-.2-.5-.5v-.7c0-.6.4-1.100 1.100-1.100z" fill="#0a0a0a"/><path d="M1.200 5.600h10.600l-.6 9.400c-.1.900-.7 1.500-1.600 1.500h-6.200c-.9 0-1.500-.6-1.600-1.500z" fill="#0a0a0a"/></svg></div>
</div>
<div class="row o" style="top:561px">
<div class="c" style="left:0px;width:52px;padding-right:1.5px;"><span style="margin-right:-3px;color:#777;-webkit-text-stroke:0">VH</span><span class="bl" style="width:26px;height:6px;background:#a8a8a8;filter:blur(2.2px);"></span></div>
<div class="c" style="left:52px;width:79px;"><span class="bl" style="width:36px;height:6px;background:#b0b0b0;filter:blur(2.2px);"></span></div>
<div class="c" style="left:131px;width:70px;"><span class="bl" style="width:24px;height:6px;background:#b8b8b8;filter:blur(2.4px);"></span></div>
<div class="c" style="left:201px;width:65px;"><span>P</span></div>
<div class="c" style="left:266px;width:62px;"><span class="bl" style="width:16px;height:5px;background:#b0b0b0;filter:blur(2px);"></span></div>
<div class="c" style="left:328px;width:83px;"><span>12 Dec 06:30</span></div>
<div class="c" style="left:411px;width:52px;"><span>12 Dec<br>06:42</span></div>
<div class="c" style="left:463px;width:85px;"><span style="margin-right:-2px;margin-left:3px">12 Dec</span><span class="bl" style="width:31px;height:7px;background:#cbcbcb;filter:blur(1.6px);"></span></div>
<div class="c" style="left:548px;width:67px;"><span>YPAD</span></div>
<div class="c" style="left:615px;width:74px;"><span>23</span></div>
<div class="c" style="left:689px;width:52px;"><span>YBBN</span></div>
<div class="c" style="left:741px;width:62px;"><span>01L</span></div>
<div class="c" style="left:803px;width:55px;"><span style="filter:blur(.45px);color:#787878;-webkit-text-stroke:.1px #787878">12 Dec<br><span class="bl" style="width:24px;height:6px;background:#a4a4a4;filter:blur(1.8px);"></span></span></div>
<div class="c" style="left:858px;width:53px;"><span>12 Dec<br>09:05</span></div>
<div class="c" style="left:911px;width:73px;"><span>12 Dec 09:20</span></div>
<div class="c" style="left:984px;width:49px;"><span>15</span></div>
<div class="c" style="left:1033px;width:48px;"><span>131</span></div>
<div class="c" style="left:1081px;width:42px;"><span>12</span></div>
<div class="c" style="left:1123px;width:48px;"><span>143</span></div>
<div class="c" style="left:1171px;width:67px;justify-content:flex-start;padding-left:0"><span class="bl" style="width:58px;height:6px;background:#b2b2b2;filter:blur(1.9px);"></span></div>
<div class="c" style="left:1238px;width:73px;justify-content:flex-start;padding-left:3px"><span class="bl" style="width:30px;height:6px;background:#a9a9a9;filter:blur(2px);"></span></div>
<div class="c" style="left:1311px;width:72px;"><span>0</span></div>
<div class="c" style="left:1383px;width:70px;"><span>12 Dec 06:42</span></div>
<div class="c" style="left:1453px;width:55px;"><span>12 Dec<br>09:05</span></div>
<div class="c" style="left:1508px;width:63px;"><span>143</span></div>
<div class="c" style="left:1571px;width:54px;"></div>
<div class="c" style="left:1625px;width:26px;padding-bottom:0"><svg style="position:relative;left:.2px;top:.9px" width="17" height="17" viewBox="0 0 17 17"><path d="M0.2 16.3L1.700 11.200 12.700 0.400Q13.600-.2 14.400.600L15.700 1.900Q16.400 2.700 15.900 3.600L5 14.600Z" fill="#0a0a0a"/><path d="M2 10.900l3.300 3.300" stroke="#fff" stroke-width=".9"/><path d="M10.800 3.300l2.500 2.500M11.900 2.300l2.500 2.500M12.900 1.300l2.500 2.500" stroke="#cfcfcf" stroke-width=".55"/></svg></div>
<div class="c" style="left:1651px;width:34px;overflow:visible"><svg style="position:relative;left:-.9px;top:-.1px" width="15" height="17" viewBox="0 0 15 17"><path d="M7.500 2.500v12M1.500 8.500h11.900" stroke="#050505" stroke-width="4.200" stroke-linecap="round" fill="none"/></svg><svg style="position:absolute;left:20px;top:4.8px" width="8" height="14" viewBox="0 0 8 14"><rect width="8" height="14" rx="3.600" fill="#0b8a0b"/><path d="M2.600 5.200L4.700 4.200V10.200" fill="none" stroke="#fff" stroke-width="1.250"/></svg></div>
<div class="c" style="left:1685px;width:48px;"><svg style="position:relative;left:.5px;top:1px" width="15" height="17" viewBox="0 0 15 17"><path d="M0.5 0.5h10.500l3.500 3.500v12.100h-14z" fill="#0a0a0a"/><g fill="#fff"><rect x="1.800" y="3.900" width="1.800" height="2"/><rect x="4.600" y="3.900" width="8.400" height="2"/><rect x="1.800" y="7.700" width="1.800" height="2"/><rect x="4.600" y="7.700" width="8.400" height="2"/><rect x="1.800" y="11.500" width="1.800" height="2"/><rect x="4.600" y="11.500" width="8.400" height="2"/></g></svg></div>
<div class="c" style="left:1733px;width:69px;"><svg width="20" height="18" viewBox="0 0 20 18"><rect x=".7" y=".7" width="18.600" height="16.600" fill="#fff" stroke="#0a0a0a" stroke-width="1.400"/><path d="M2 3.500l3 .3.300.9-1.600 1.300-1.700-.6zM2 8.200l2.300-.9 2.200 1.500-.4 1.800-1.500 1.200-.6 2.300-1.200-.2-.5-2.700zM8.200 5l1.200-1.800 2.600-.9 1.100.7 2.300-.9 2.700.3v3.800l-1.200 2.200-1.200-.9-.7 2-1.600 1-.4 2.600-1.500.4-1-2.700.2-1.900-1.700-.9-.8-1.700zM14.600 13.600l3-2.600v4.200h-3.200z" fill="#0a0a0a"/><path d="M10.400 5.200h2.600" stroke="#fff" stroke-width=".8"/><path d="M2 13.800l.8.900M16.800 3.200l.8-.5" stroke="#0a0a0a" stroke-width=".7"/></svg><div style="position:absolute;left:38px;top:4px;width:10px;height:10px;border-radius:5px;background:#f00"></div></div>
<div class="c" style="left:1802px;width:52px;"></div>
<div class="c" style="left:1854px;width:45px;"><svg style="position:relative;left:.25px;top:.5px" width="12.3" height="16.200" viewBox="0 0 13 17"><path d="M4.800 2.200v-1c0-.5.300-.8.800-.8h1.800c.5 0 .8.300.8.800v1" fill="none" stroke="#0a0a0a" stroke-width="1.100"/><path d="M1.400 2.300h10.200c.7 0 1.100.5 1.100 1.100v.7c0 .3-.2.500-.5.500h-11.400c-.3 0-.5-.2-.5-.5v-.7c0-.6.4-1.100 1.100-1.100z" fill="#0a0a0a"/><path d="M1.200 5.600h10.600l-.6 9.400c-.1.900-.7 1.500-1.600 1.500h-6.200c-.9 0-1.500-.6-1.600-1.500z" fill="#0a0a0a"/></svg></div>
</div>
<div class="row e" style="top:594px">
<div class="c" style="left:0px;width:52px;padding-right:1.5px;"><span style="margin-right:-3px;color:#777;-webkit-text-stroke:0">VH</span><span class="bl" style="width:24px;height:6px;background:#a8a8a8;filter:blur(2.2px);"></span></div>
<div class="c" style="left:52px;width:79px;"><span class="bl" style="width:34px;height:6px;background:#b0b0b0;filter:blur(2.2px);"></span></div>
<div class="c" style="left:131px;width:70px;"><span class="bl" style="width:22px;height:6px;background:#b8b8b8;filter:blur(2.4px);"></span></div>
<div class="c" style="left:201px;width:65px;"><span>H</span></div>
<div class="c" style="left:266px;width:62px;"><span class="bl" style="width:14px;height:5px;background:#b0b0b0;filter:blur(2px);"></span></div>
<div class="c" style="left:328px;width:83px;"><span>09 Dec 07:35</span></div>
<div class="c" style="left:411px;width:52px;"><span>09 Dec<br>07:37</span></div>
<div class="c" style="left:463px;width:85px;"><span style="margin-right:-2px;margin-left:3px">09 Dec</span><span class="bl" style="width:31px;height:7px;background:#cbcbcb;filter:blur(1.6px);"></span></div>
<div class="c" style="left:548px;width:67px;"><span>YBTL</span></div>
<div class="c" style="left:615px;width:74px;"><span>01</span></div>
<div class="c" style="left:689px;width:52px;"><span>YBCS</span></div>
<div class="c" style="left:741px;width:62px;"><span>33</span></div>
<div class="c" style="left:803px;width:55px;"><span style="filter:blur(.45px);color:#787878;-webkit-text-stroke:.1px #787878">09 Dec<br><span class="bl" style="width:26px;height:6px;background:#a4a4a4;filter:blur(1.8px);"></span></span></div>
<div class="c" style="left:858px;width:53px;"><span>09 Dec<br>08:19</span></div>
<div class="c" style="left:911px;width:73px;"><span>09 Dec 08:25</span></div>
<div class="c" style="left:984px;width:49px;"><span>7</span></div>
<div class="c" style="left:1033px;width:48px;"><span>32</span></div>
<div class="c" style="left:1081px;width:42px;"><span>10</span></div>
<div class="c" style="left:1123px;width:48px;"><span>43</span></div>
<div class="c" style="left:1171px;width:67px;justify-content:flex-start;padding-left:0"><span class="bl" style="width:52px;height:6px;background:#b2b2b2;filter:blur(1.9px);"></span></div>
<div class="c" style="left:1238px;width:73px;justify-content:flex-start;padding-left:3px"><span class="bl" style="width:42px;height:6px;background:#a9a9a9;filter:blur(2px);"></span></div>
<div class="c" style="left:1311px;width:72px;"><span>0</span></div>
<div class="c" style="left:1383px;width:70px;"><span>09 Dec 07:37</span></div>
<div class="c" style="left:1453px;width:55px;"><span>09 Dec<br>08:19</span></div>
<div class="c" style="left:1508px;width:63px;"><span>43</span></div>
<div class="c" style="left:1571px;width:54px;"></div>
<div class="c" style="left:1625px;width:26px;padding-bottom:0"><svg style="position:relative;left:.2px;top:.9px" width="17" height="17" viewBox="0 0 17 17"><path d="M0.2 16.3L1.700 11.200 12.700 0.400Q13.600-.2 14.400.600L15.700 1.900Q16.400 2.700 15.900 3.600L5 14.600Z" fill="#0a0a0a"/><path d="M2 10.900l3.300 3.300" stroke="#fff" stroke-width=".9"/><path d="M10.800 3.300l2.500 2.500M11.900 2.300l2.500 2.500M12.900 1.300l2.500 2.500" stroke="#cfcfcf" stroke-width=".55"/></svg></div>
<div class="c" style="left:1651px;width:34px;overflow:visible"><svg style="position:relative;left:-.9px;top:-.1px" width="15" height="17" viewBox="0 0 15 17"><path d="M7.500 2.500v12M1.500 8.500h11.900" stroke="#050505" stroke-width="4.200" stroke-linecap="round" fill="none"/></svg><svg style="position:absolute;left:20px;top:4.8px" width="8" height="14" viewBox="0 0 8 14"><rect width="8" height="14" rx="3.600" fill="#0b8a0b"/><path d="M2.600 5.200L4.700 4.200V10.200" fill="none" stroke="#fff" stroke-width="1.250"/></svg></div>
<div class="c" style="left:1685px;width:48px;"><svg style="position:relative;left:.5px;top:1px" width="15" height="17" viewBox="0 0 15 17"><path d="M0.5 0.5h10.500l3.500 3.500v12.100h-14z" fill="#0a0a0a"/><g fill="#fff"><rect x="1.800" y="3.900" width="1.800" height="2"/><rect x="4.600" y="3.900" width="8.400" height="2"/><rect x="1.800" y="7.700" width="1.800" height="2"/><rect x="4.600" y="7.700" width="8.400" height="2"/><rect x="1.800" y="11.500" width="1.800" height="2"/><rect x="4.600" y="11.500" width="8.400" height="2"/></g></svg></div>
<div class="c" style="left:1733px;width:69px;"><svg width="20" height="18" viewBox="0 0 20 18"><rect x=".7" y=".7" width="18.600" height="16.600" fill="#fff" stroke="#0a0a0a" stroke-width="1.400"/><path d="M2 3.500l3 .3.300.9-1.600 1.300-1.700-.6zM2 8.200l2.300-.9 2.200 1.500-.4 1.800-1.500 1.200-.6 2.300-1.200-.2-.5-2.700zM8.200 5l1.200-1.800 2.600-.9 1.100.7 2.300-.9 2.700.3v3.800l-1.200 2.200-1.200-.9-.7 2-1.600 1-.4 2.600-1.500.4-1-2.700.2-1.900-1.700-.9-.8-1.700zM14.600 13.600l3-2.600v4.200h-3.200z" fill="#0a0a0a"/><path d="M10.400 5.200h2.600" stroke="#fff" stroke-width=".8"/><path d="M2 13.800l.8.900M16.800 3.200l.8-.5" stroke="#0a0a0a" stroke-width=".7"/></svg></div>
<div class="c" style="left:1802px;width:52px;"></div>
<div class="c" style="left:1854px;width:45px;"><svg style="position:relative;left:.25px;top:.5px" width="12.3" height="16.200" viewBox="0 0 13 17"><path d="M4.800 2.200v-1c0-.5.300-.8.800-.8h1.800c.5 0 .8.300.8.800v1" fill="none" stroke="#0a0a0a" stroke-width="1.100"/><path d="M1.400 2.300h10.200c.7 0 1.100.5 1.100 1.100v.7c0 .3-.2.500-.5.500h-11.400c-.3 0-.5-.2-.5-.5v-.7c0-.6.4-1.100 1.100-1.100z" fill="#0a0a0a"/><path d="M1.200 5.600h10.600l-.6 9.400c-.1.900-.7 1.500-1.600 1.500h-6.200c-.9 0-1.500-.6-1.600-1.500z" fill="#0a0a0a"/></svg></div>
</div>
<div class="row o" style="top:627px">
<div class="c" style="left:0px;width:52px;padding-right:1.5px;"><span style="margin-right:-3px;color:#777;-webkit-text-stroke:0">VH</span><span class="bl" style="width:22px;height:6px;background:#a8a8a8;filter:blur(2.2px);"></span></div>
<div class="c" style="left:52px;width:79px;"><span class="bl" style="width:38px;height:6px;background:#b0b0b0;filter:blur(2.2px);"></span></div>
<div class="c" style="left:131px;width:70px;"><span class="bl" style="width:24px;height:6px;background:#b8b8b8;filter:blur(2.4px);"></span></div>
<div class="c" style="left:201px;width:65px;"><span>A</span></div>
<div class="c" style="left:266px;width:62px;"><span class="bl" style="width:16px;height:5px;background:#b0b0b0;filter:blur(2px);"></span></div>
<div class="c" style="left:328px;width:83px;"><span>09 Dec 05:45</span></div>
<div class="c" style="left:411px;width:52px;"><span>09 Dec<br>05:55</span></div>
<div class="c" style="left:463px;width:85px;"><span style="margin-right:-2px;margin-left:3px">09 Dec</span><span class="bl" style="width:31px;height:7px;background:#cbcbcb;filter:blur(1.6px);"></span></div>
<div class="c" style="left:548px;width:67px;"><span>YBMK</span></div>
<div class="c" style="left:615px;width:74px;"><span>14</span></div>
<div class="c" style="left:689px;width:52px;"><span>YBBN</span></div>
<div class="c" style="left:741px;width:62px;"><span>19L</span></div>
<div class="c" style="left:803px;width:55px;"><span style="filter:blur(.45px);color:#787878;-webkit-text-stroke:.1px #787878">09 Dec<br><span class="bl" style="width:24px;height:6px;background:#a4a4a4;filter:blur(1.8px);"></span></span></div>
<div class="c" style="left:858px;width:53px;"><span>09 Dec<br>07:14</span></div>
<div class="c" style="left:911px;width:73px;"><span>09 Dec 07:05</span></div>
<div class="c" style="left:984px;width:49px;"><span>15</span></div>
<div class="c" style="left:1033px;width:48px;"><span>70</span></div>
<div class="c" style="left:1081px;width:42px;"><span>9</span></div>
<div class="c" style="left:1123px;width:48px;"><span>80</span></div>
<div class="c" style="left:1171px;width:67px;justify-content:flex-start;padding-left:0"><span class="bl" style="width:60px;height:6px;background:#b2b2b2;filter:blur(1.9px);"></span></div>
<div class="c" style="left:1238px;width:73px;justify-content:flex-start;padding-left:3px"><span class="bl" style="width:32px;height:6px;background:#a9a9a9;filter:blur(2px);"></span></div>
<div class="c" style="left:1311px;width:72px;"><span>0</span></div>
<div class="c" style="left:1383px;width:70px;"><span>09 Dec 05:55</span></div>
<div class="c" style="left:1453px;width:55px;"><span>09 Dec<br>07:14</span></div>
<div class="c" style="left:1508px;width:63px;"><span>80</span></div>
<div class="c" style="left:1571px;width:54px;"></div>
<div class="c" style="left:1625px;width:26px;padding-bottom:0"><svg style="position:relative;left:.2px;top:.9px" width="17" height="17" viewBox="0 0 17 17"><path d="M0.2 16.3L1.700 11.200 12.700 0.400Q13.600-.2 14.400.600L15.700 1.900Q16.400 2.700 15.900 3.600L5 14.600Z" fill="#0a0a0a"/><path d="M2 10.900l3.300 3.300" stroke="#fff" stroke-width=".9"/><path d="M10.800 3.300l2.500 2.500M11.900 2.300l2.500 2.500M12.900 1.300l2.500 2.500" stroke="#cfcfcf" stroke-width=".55"/></svg></div>
<div class="c" style="left:1651px;width:34px;overflow:visible"><svg style="position:relative;left:-.9px;top:-.1px" width="15" height="17" viewBox="0 0 15 17"><path d="M7.500 2.500v12M1.500 8.500h11.900" stroke="#050505" stroke-width="4.200" stroke-linecap="round" fill="none"/></svg><svg style="position:absolute;left:20px;top:4.8px" width="8" height="14" viewBox="0 0 8 14"><rect width="8" height="14" rx="3.600" fill="#0b8a0b"/><path d="M2.600 5.200L4.700 4.200V10.200" fill="none" stroke="#fff" stroke-width="1.250"/></svg></div>
<div class="c" style="left:1685px;width:48px;"><svg style="position:relative;left:.5px;top:1px" width="15" height="17" viewBox="0 0 15 17"><path d="M0.5 0.5h10.500l3.500 3.500v12.100h-14z" fill="#0a0a0a"/><g fill="#fff"><rect x="1.800" y="3.900" width="1.800" height="2"/><rect x="4.600" y="3.900" width="8.400" height="2"/><rect x="1.800" y="7.700" width="1.800" height="2"/><rect x="4.600" y="7.700" width="8.400" height="2"/><rect x="1.800" y="11.500" width="1.800" height="2"/><rect x="4.600" y="11.500" width="8.400" height="2"/></g></svg></div>
<div class="c" style="left:1733px;width:69px;"><svg width="20" height="18" viewBox="0 0 20 18"><rect x=".7" y=".7" width="18.600" height="16.600" fill="#fff" stroke="#0a0a0a" stroke-width="1.400"/><path d="M2 3.500l3 .3.300.9-1.600 1.300-1.700-.6zM2 8.200l2.300-.9 2.200 1.500-.4 1.800-1.500 1.200-.6 2.300-1.200-.2-.5-2.700zM8.200 5l1.200-1.800 2.600-.9 1.100.7 2.300-.9 2.700.3v3.800l-1.200 2.200-1.200-.9-.7 2-1.600 1-.4 2.600-1.500.4-1-2.700.2-1.900-1.700-.9-.8-1.700zM14.600 13.600l3-2.600v4.200h-3.200z" fill="#0a0a0a"/><path d="M10.400 5.200h2.600" stroke="#fff" stroke-width=".8"/><path d="M2 13.800l.8.900M16.800 3.200l.8-.5" stroke="#0a0a0a" stroke-width=".7"/></svg></div>
<div class="c" style="left:1802px;width:52px;"></div>
<div class="c" style="left:1854px;width:45px;"><svg style="position:relative;left:.25px;top:.5px" width="12.3" height="16.200" viewBox="0 0 13 17"><path d="M4.800 2.200v-1c0-.5.300-.8.800-.8h1.800c.5 0 .8.300.8.800v1" fill="none" stroke="#0a0a0a" stroke-width="1.100"/><path d="M1.400 2.300h10.200c.7 0 1.100.5 1.100 1.100v.7c0 .3-.2.500-.5.500h-11.400c-.3 0-.5-.2-.5-.5v-.7c0-.6.4-1.100 1.100-1.100z" fill="#0a0a0a"/><path d="M1.200 5.600h10.600l-.6 9.400c-.1.900-.7 1.500-1.600 1.500h-6.200c-.9 0-1.500-.6-1.600-1.500z" fill="#0a0a0a"/></svg></div>
</div>
<div class="row e" style="top:660px">
<div class="c" style="left:0px;width:52px;padding-right:1.5px;"><span style="margin-right:-3px;color:#777;-webkit-text-stroke:0">VH</span><span class="bl" style="width:22px;height:6px;background:#a8a8a8;filter:blur(2.2px);"></span></div>
<div class="c" style="left:52px;width:79px;"><span class="bl" style="width:42px;height:6px;background:#b0b0b0;filter:blur(2.2px);"></span></div>
<div class="c" style="left:131px;width:70px;"><span class="bl" style="width:24px;height:6px;background:#b8b8b8;filter:blur(2.4px);"></span></div>
<div class="c" style="left:201px;width:65px;"><span>H</span></div>
<div class="c" style="left:266px;width:62px;"><span class="bl" style="width:14px;height:5px;background:#b0b0b0;filter:blur(2px);"></span></div>
<div class="c" style="left:328px;width:83px;"><span>09 Dec 04:15</span></div>
<div class="c" style="left:411px;width:52px;"><span>09 Dec<br>04:20</span></div>
<div class="c" style="left:463px;width:85px;"><span style="margin-right:-2px;margin-left:3px">09 Dec</span><span class="bl" style="width:31px;height:7px;background:#cbcbcb;filter:blur(1.6px);"></span></div>
<div class="c" style="left:548px;width:67px;"><span>YBRK</span></div>
<div class="c" style="left:615px;width:74px;"><span>33</span></div>
<div class="c" style="left:689px;width:52px;"><span>YBMK</span></div>
<div class="c" style="left:741px;width:62px;"><span>14</span></div>
<div class="c" style="left:803px;width:55px;"><span style="filter:blur(.45px);color:#787878;-webkit-text-stroke:.1px #787878">09 Dec<br><span class="bl" style="width:26px;height:6px;background:#a4a4a4;filter:blur(1.8px);"></span></span></div>
<div class="c" style="left:858px;width:53px;"><span>09 Dec<br>05:10</span></div>
<div class="c" style="left:911px;width:73px;"><span>09 Dec 04:55</span></div>
<div class="c" style="left:984px;width:49px;"><span>5</span></div>
<div class="c" style="left:1033px;width:48px;"><span>40</span></div>
<div class="c" style="left:1081px;width:42px;"><span>10</span></div>
<div class="c" style="left:1123px;width:48px;"><span>50</span></div>
<div class="c" style="left:1171px;width:67px;justify-content:flex-start;padding-left:0"><span class="bl" style="width:52px;height:6px;background:#b2b2b2;filter:blur(1.9px);"></span></div>
<div class="c" style="left:1238px;width:73px;justify-content:flex-start;padding-left:3px"><span class="bl" style="width:30px;height:6px;background:#a9a9a9;filter:blur(2px);"></span></div>
<div class="c" style="left:1311px;width:72px;"><span>0</span></div>
<div class="c" style="left:1383px;width:70px;"><span>09 Dec 04:20</span></div>
<div class="c" style="left:1453px;width:55px;"><span>09 Dec<br>05:10</span></div>
<div class="c" style="left:1508px;width:63px;"><span>50</span></div>
<div class="c" style="left:1571px;width:54px;"></div>
<div class="c" style="left:1625px;width:26px;padding-bottom:0"><svg style="position:relative;left:.2px;top:.9px" width="17" height="17" viewBox="0 0 17 17"><path d="M0.2 16.3L1.700 11.200 12.700 0.400Q13.600-.2 14.400.600L15.700 1.900Q16.400 2.700 15.900 3.600L5 14.600Z" fill="#0a0a0a"/><path d="M2 10.900l3.300 3.300" stroke="#fff" stroke-width=".9"/><path d="M10.800 3.300l2.500 2.500M11.900 2.300l2.500 2.500M12.900 1.300l2.500 2.500" stroke="#cfcfcf" stroke-width=".55"/></svg></div>
<div class="c" style="left:1651px;width:34px;overflow:visible"><svg style="position:relative;left:-.9px;top:-.1px" width="15" height="17" viewBox="0 0 15 17"><path d="M7.500 2.500v12M1.500 8.500h11.900" stroke="#050505" stroke-width="4.200" stroke-linecap="round" fill="none"/></svg><svg style="position:absolute;left:20px;top:4.8px" width="8" height="14" viewBox="0 0 8 14"><rect width="8" height="14" rx="3.600" fill="#0b8a0b"/><path d="M2.600 5.200L4.700 4.200V10.200" fill="none" stroke="#fff" stroke-width="1.250"/></svg></div>
<div class="c" style="left:1685px;width:48px;"><svg style="position:relative;left:.5px;top:1px" width="15" height="17" viewBox="0 0 15 17"><path d="M0.5 0.5h10.500l3.500 3.500v12.100h-14z" fill="#0a0a0a"/><g fill="#fff"><rect x="1.800" y="3.900" width="1.800" height="2"/><rect x="4.600" y="3.900" width="8.400" height="2"/><rect x="1.800" y="7.700" width="1.800" height="2"/><rect x="4.600" y="7.700" width="8.400" height="2"/><rect x="1.800" y="11.500" width="1.800" height="2"/><rect x="4.600" y="11.500" width="8.400" height="2"/></g></svg></div>
<div class="c" style="left:1733px;width:69px;"><svg width="20" height="18" viewBox="0 0 20 18"><rect x=".7" y=".7" width="18.600" height="16.600" fill="#fff" stroke="#0a0a0a" stroke-width="1.400"/><path d="M2 3.500l3 .3.300.9-1.600 1.300-1.700-.6zM2 8.200l2.300-.9 2.200 1.500-.4 1.800-1.500 1.200-.6 2.300-1.200-.2-.5-2.700zM8.200 5l1.200-1.800 2.600-.9 1.100.7 2.300-.9 2.700.3v3.800l-1.200 2.200-1.200-.9-.7 2-1.600 1-.4 2.600-1.500.4-1-2.700.2-1.900-1.700-.9-.8-1.700zM14.600 13.600l3-2.600v4.200h-3.200z" fill="#0a0a0a"/><path d="M10.400 5.200h2.600" stroke="#fff" stroke-width=".8"/><path d="M2 13.800l.8.900M16.800 3.200l.8-.5" stroke="#0a0a0a" stroke-width=".7"/></svg></div>
<div class="c" style="left:1802px;width:52px;"></div>
<div class="c" style="left:1854px;width:45px;"><svg style="position:relative;left:.25px;top:.5px" width="12.3" height="16.200" viewBox="0 0 13 17"><path d="M4.800 2.200v-1c0-.5.300-.8.800-.8h1.800c.5 0 .8.300.8.800v1" fill="none" stroke="#0a0a0a" stroke-width="1.100"/><path d="M1.400 2.300h10.200c.7 0 1.100.5 1.100 1.100v.7c0 .3-.2.500-.5.500h-11.400c-.3 0-.5-.2-.5-.5v-.7c0-.6.4-1.100 1.100-1.100z" fill="#0a0a0a"/><path d="M1.200 5.600h10.600l-.6 9.400c-.1.900-.7 1.500-1.600 1.500h-6.200c-.9 0-1.500-.6-1.600-1.500z" fill="#0a0a0a"/></svg></div>
</div>
</div>
<div class="abs" style="left:1898px;top:301px;width:9px;height:644px;background:#efefef"></div>
<div class="abs" style="left:1902px;top:318px;width:5px;height:117px;background:#bdbdbd"></div>
<div class="abs" style="left:1898px;top:301px;width:9px;height:644px;overflow:hidden">
<div class="abs" style="left:6.5px;top:8.5px;width:0;height:0;border-left:2.5px solid transparent;border-right:2.5px solid transparent;border-bottom:2.5px solid #444"></div>
<div class="abs" style="left:6.5px;top:633px;width:0;height:0;border-left:2.5px solid transparent;border-right:2.5px solid transparent;border-top:2.5px solid #444"></div>
</div>
<div class="abs" style="left:0;top:945px;width:1907px;height:42px;background:#e1e1df"></div>
<span class="t" style="left:792px;top:960px;font-size:12.5px;font-weight:bold;color:#5c5c5c;line-height:15px;transform:scaleX(.88)">Show</span>
<div class="abs" style="left:825px;top:956.5px;width:45px;height:20px;background:#fff;border:1px solid #6b6b6b;border-radius:2px"><span class="t" style="left:4px;top:2px;font-size:12.5px;color:#444;line-height:15px">100</span><svg class="abs" style="left:30px;top:5px" width="10" height="8" viewBox="0 0 10 8"><path d="M1.500 2l3.500 3.500 3.500-3.500" fill="none" stroke="#333" stroke-width="1.600"/></svg></div>
<span class="t" style="left:874px;top:960px;font-size:12.5px;font-weight:bold;color:#5c5c5c;line-height:15px;transform:scaleX(.91)">Per Page</span>
<div class="abs" style="left:957px;top:957px;width:200px;height:24px;background:#fff;border-top:1px solid #7a7a7a;border-left:1px solid #7a7a7a"></div>
<svg class="abs" style="left:958px;top:961px" width="10" height="16" viewBox="0 0 10 16"><path d="M8 2l-5.500 6 5.500 6" fill="none" stroke="#444" stroke-width="1.800"/></svg>
<svg class="abs" style="left:1146px;top:961px" width="10" height="16" viewBox="0 0 10 16"><path d="M2 2l5.500 6-5.500 6" fill="none" stroke="#444" stroke-width="1.800"/></svg>
<span class="t tc" style="left:1007px;width:100px;text-align:center;top:962px;font-size:13px;color:#555;line-height:16px;-webkit-text-stroke:.3px #555;transform:scaleX(.92)">Page 1 of 2</span>
<div class="abs" style="left:1582px;top:950px;width:150px;height:32px;background:#444;text-align:center"><span style="display:inline-block;color:#fff;font-weight:bold;font-size:15px;line-height:34px;transform:scaleX(.88)">Export CSV</span></div>
<div class="abs" style="left:1747px;top:950px;width:150px;height:32px;background:#444;text-align:center"><span style="display:inline-block;color:#fff;font-weight:bold;font-size:15px;line-height:34px;transform:scaleX(.88)">Post Flight Entry</span></div>
<div class="abs" style="left:0;top:987px;width:1907px;height:3px;background:#161616"></div>
<div class="abs" style="left:45px;top:987px;width:343px;height:3px;background:#f2f2f2;border-top:1px solid #bbb"></div>
<div class="abs" style="left:489px;top:987px;width:45px;height:3px;background:#3c3c3c"></div>
</body></html>
